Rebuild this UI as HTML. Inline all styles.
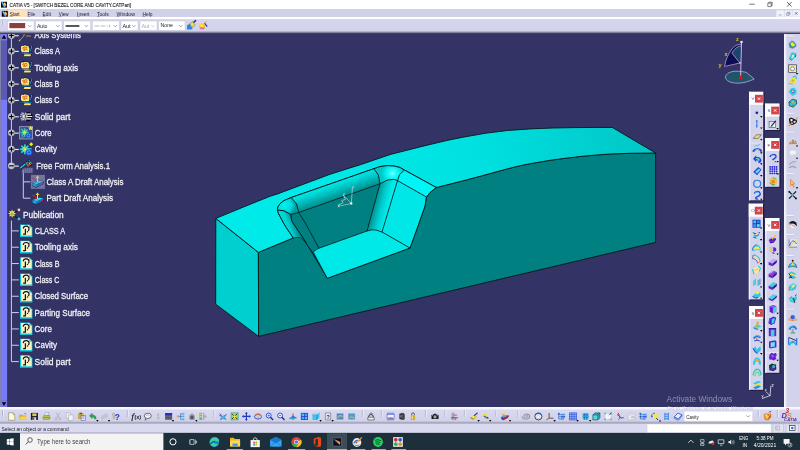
<!DOCTYPE html>
<html lang="en"><head><meta charset="utf-8"><title>CATIA V5 - [SWITCH BEZEL CORE AND CAVITY.CATPart]</title>
<style>
html,body{margin:0;padding:0;width:800px;height:450px;overflow:hidden;background:#333366;font-family:"Liberation Sans",sans-serif;}
div{position:absolute;overflow:hidden}
#app{left:0;top:0;width:800px;height:450px;will-change:transform;background:#333366}
svg{position:absolute;left:0;top:0;display:block}
svg text{font-family:"Liberation Sans",sans-serif}
#title{left:0;top:0;width:800px;height:9px;background:#fff}
#menu{left:0;top:9px;width:800px;height:8px;background:linear-gradient(#fff 0,#fff .4px,#d1d1e9 .4px,#d1d1e9 8px)}
#tb{left:0;top:17px;width:800px;height:17px;z-index:5;background:linear-gradient(#d1d1e9 0,#d1d1e9 .3px,#fff .3px,#fff 1.5px,#d6d6ee 2.1px,#d2d2ea 13.5px,#b4b4c6 14.5px,#8e8ea6 15.3px,#56567e 16.1px,#333366 16.7px)}
#view{left:0;top:32px;width:784px;height:375px;background:transparent}
#right{left:784px;top:32px;width:16px;height:376px;background:linear-gradient(90deg,#f6f6fd 0,#ececf8 1.6px,#d6d6ee 2.8px,#d2d2ea 3.4px,#d2d2ea 100%)}
#btb{left:0;top:407px;width:800px;height:17px;background:linear-gradient(#333366 0,#333366 .1px,#fafaff .1px,#f2f2fb 2.1px,#d8d8f0 2.9px,#d1d1e9 14.1px,#a8a8bc 15.3px,#b6b6ca 16.6px,#d9d9f0 16.6px)}
#status{left:0;top:424px;width:800px;height:9px;background:linear-gradient(#d9d9f0 0,#d9d9f0 8.2px,#8a90a4 9px)}
#task{left:0;top:433px;width:800px;height:17px;background:#1d2f3b}
</style></head><body>
<div id="app">

<div id="title"><svg class="" width="800" height="9" viewBox="0 0 800 9">
<g transform="translate(1,1.8)"><rect x="0" y="0" width="6" height="5.800" fill="#06060e"/><ellipse cx="3.900" cy="2.600" rx="1.250" ry="2.100" transform="rotate(-28 3.900 2.600)" fill="#f0942a"/><ellipse cx="3.700" cy="2.300" rx=".6" ry="1.200" transform="rotate(-28 3.700 2.300)" fill="#ffd878"/><path d="M.2 .5L1.700 .4L4.400 5.700L2.700 5.700Z" fill="#2a8ef0"/><path d="M.9 .5L1.700 .4L4.400 5.700L3.700 5.700Z" fill="#7fd0ff"/></g>
<text x="9.6" y="6.9" font-size="5.6" fill="#1a1a1a" textLength="121.5" lengthAdjust="spacingAndGlyphs" stroke="#1a1a1a" stroke-width=".12">CATIA V5 - [SWITCH BEZEL CORE AND CAVITY.CATPart]</text>
<path d="M749.400 4.200h5.200" stroke="#333" stroke-width=".7"/>
<path d="M767.800 3.200h3.400v3.400h-3.400z M768.800 3.200v-1h3.400v3.400h-1" stroke="#333" stroke-width=".6" fill="none"/>
<path d="M787 2l4.600 4.600M791.600 2l-4.600 4.600" stroke="#222" stroke-width=".7"/>
</svg></div>
<div id="menu"><svg class="" width="800" height="8" viewBox="0 9 800 8">
<rect x="8.6" y="9.4" width="18.4" height="7.9" fill="#fbe2bd"/>
<g transform="translate(1.8,10.9)"><rect x="0" y="0" width="6" height="5.800" fill="#06060e"/><ellipse cx="3.900" cy="2.600" rx="1.250" ry="2.100" transform="rotate(-28 3.900 2.600)" fill="#f0942a"/><ellipse cx="3.700" cy="2.300" rx=".6" ry="1.200" transform="rotate(-28 3.700 2.300)" fill="#ffd878"/><path d="M.2 .5L1.700 .4L4.400 5.700L2.700 5.700Z" fill="#2a8ef0"/><path d="M.9 .5L1.700 .4L4.400 5.700L3.700 5.700Z" fill="#7fd0ff"/></g>
<text x="9.8" y="16.15" font-size="6" fill="#1c1c30" textLength="9.8" lengthAdjust="spacingAndGlyphs" >Start</text>
<path d="M9.8 16.700h2.8" stroke="#1c1c30" stroke-width=".45" opacity=".8"/>
<text x="27.6" y="16.15" font-size="6" fill="#1c1c30" textLength="7.6" lengthAdjust="spacingAndGlyphs" >File</text>
<path d="M27.6 16.700h2.8" stroke="#1c1c30" stroke-width=".45" opacity=".8"/>
<text x="42.6" y="16.15" font-size="6" fill="#1c1c30" textLength="8.4" lengthAdjust="spacingAndGlyphs" >Edit</text>
<path d="M42.6 16.700h2.8" stroke="#1c1c30" stroke-width=".45" opacity=".8"/>
<text x="58.8" y="16.15" font-size="6" fill="#1c1c30" textLength="9.8" lengthAdjust="spacingAndGlyphs" >View</text>
<path d="M58.8 16.700h2.8" stroke="#1c1c30" stroke-width=".45" opacity=".8"/>
<text x="77" y="16.15" font-size="6" fill="#1c1c30" textLength="12.5" lengthAdjust="spacingAndGlyphs" >Insert</text>
<path d="M77 16.700h2.8" stroke="#1c1c30" stroke-width=".45" opacity=".8"/>
<text x="97" y="16.15" font-size="6" fill="#1c1c30" textLength="11.7" lengthAdjust="spacingAndGlyphs" >Tools</text>
<path d="M97 16.700h2.8" stroke="#1c1c30" stroke-width=".45" opacity=".8"/>
<text x="116.5" y="16.15" font-size="6" fill="#1c1c30" textLength="18.5" lengthAdjust="spacingAndGlyphs" >Window</text>
<path d="M116.5 16.700h2.8" stroke="#1c1c30" stroke-width=".45" opacity=".8"/>
<text x="142.5" y="16.15" font-size="6" fill="#1c1c30" textLength="10.0" lengthAdjust="spacingAndGlyphs" >Help</text>
<path d="M142.5 16.700h2.8" stroke="#1c1c30" stroke-width=".45" opacity=".8"/>
<rect x="776.400" y="10.400" width="7.500" height="6.400" fill="#f2f2fa"/><rect x="784.600" y="10.400" width="7.200" height="6.400" fill="#f2f2fa"/><rect x="792.500" y="10.400" width="7.500" height="6.400" fill="#f2f2fa"/>
<path d="M778.600 15h3" stroke="#7080b0" stroke-width=".6"/><path d="M786.600 13.200h2.400v2.200h-2.400zM787.600 13.200v-1h2.400v2.200h-1" stroke="#5068a0" stroke-width=".5" fill="none"/><path d="M794.800 12l2.800 2.800M797.600 12l-2.800 2.800" stroke="#4060a0" stroke-width=".7"/>
</svg></div>
<div id="tb"><svg class="" width="800" height="17" viewBox="0 17 800 17">
<path d="M3 19.800v5.800" stroke="#9c9cb8" stroke-width=".8"/><path d="M3.800 19.800v5.800" stroke="#fff" stroke-width=".6"/>
<rect x="7.6" y="21" width="26.4" height="9.2" fill="#fff" stroke="#c6c6d2" stroke-width=".5"/><path d="M28.2 25.2l1.6 1.6l1.6-1.6" stroke="#555" stroke-width=".55" fill="none"/>
<rect x="9.4" y="23" width="15.8" height="5.2" fill="#8e3d3f"/>
<rect x="35.6" y="21" width="26.4" height="9.2" fill="#fff" stroke="#c6c6d2" stroke-width=".5"/><path d="M56.199999999999996 25.2l1.6 1.6l1.6-1.6" stroke="#555" stroke-width=".55" fill="none"/>
<text x="36.9" y="27.9" font-size="5.8" fill="#222" textLength="10.6" lengthAdjust="spacingAndGlyphs" >Auto</text>
<rect x="63.6" y="21" width="26.999999999999993" height="9.2" fill="#fff" stroke="#c6c6d2" stroke-width=".5"/><path d="M84.8 25.2l1.6 1.6l1.6-1.6" stroke="#555" stroke-width=".55" fill="none"/>
<path d="M65.6 26h13.8" stroke="#111" stroke-width="1.4"/>
<rect x="92.4" y="21" width="27.0" height="9.2" fill="#fff" stroke="#c6c6d2" stroke-width=".5"/><path d="M113.60000000000001 25.2l1.6 1.6l1.6-1.6" stroke="#555" stroke-width=".55" fill="none"/>
<path d="M94.5 26h4.6M100.6 26h4.6M106.6 26h1.2M109.6 24.8v2.4" stroke="#999" stroke-width=".7"/>
<rect x="121" y="21" width="17" height="9.2" fill="#fff" stroke="#c6c6d2" stroke-width=".5"/><path d="M132.20000000000002 25.2l1.6 1.6l1.6-1.6" stroke="#555" stroke-width=".55" fill="none"/>
<text x="122.4" y="27.9" font-size="5.8" fill="#222" textLength="8.2" lengthAdjust="spacingAndGlyphs" >Aut</text>
<rect x="140" y="21" width="17" height="9.2" fill="#fff" stroke="#c6c6d2" stroke-width=".5"/><path d="M151.20000000000002 25.2l1.6 1.6l1.6-1.6" stroke="#a8a8b8" stroke-width=".55" fill="none"/>
<text x="141.4" y="27.9" font-size="5.8" fill="#aaa" textLength="8.2" lengthAdjust="spacingAndGlyphs" >Aut</text>
<rect x="158.6" y="21" width="26.400000000000006" height="9.2" fill="#fff" stroke="#c6c6d2" stroke-width=".5"/><path d="M179.20000000000002 25.2l1.6 1.6l1.6-1.6" stroke="#555" stroke-width=".55" fill="none"/>
<text x="160.6" y="27.3" font-size="5.8" fill="#222" textLength="12.4" lengthAdjust="spacingAndGlyphs" >None</text>
<path d="M187 25.2l3-1.4 2.6 4.4-1 1.4h-4.6z" fill="#2a86e8"/><path d="M189.6 23.6l3.4-2 2.2 3.8-3.4 2z" fill="#e8e040" stroke="#555" stroke-width=".4"/><path d="M193.6 22.6l2.4-2.4" stroke="#1a1a90" stroke-width="1.4"/>
<circle cx="202.2" cy="26.4" r="3" fill="#f8c820"/><path d="M199.4 27.6a3 3 0 0 0 5.6 0" fill="#e060d0"/><circle cx="201.6" cy="25.6" r="1.2" fill="#fff36a"/><path d="M204.6 23.2l2.6 3.4" stroke="#2a4ab0" stroke-width="1.3"/><path d="M204.4 22.6l2.4-1.4" stroke="#f0a080" stroke-width="1"/>
</svg></div>
<div id="view"><svg class="" width="784" height="375" viewBox="0 32 784 375">
<defs>
<linearGradient id="gtop" gradientUnits="userSpaceOnUse" x1="300" y1="220" x2="640" y2="130"><stop offset="0" stop-color="#00eaea"/><stop offset=".5" stop-color="#00e2e2"/><stop offset=".8" stop-color="#00d2d2"/><stop offset="1" stop-color="#00c8c8"/></linearGradient>
<linearGradient id="gback" gradientUnits="userSpaceOnUse" x1="330" y1="182" x2="336" y2="199"><stop offset="0" stop-color="#00ecec"/><stop offset=".25" stop-color="#00dede"/><stop offset=".5" stop-color="#00c4c4"/><stop offset=".75" stop-color="#00a8a8"/><stop offset="1" stop-color="#008e8e"/></linearGradient>
<linearGradient id="gleftf" gradientUnits="userSpaceOnUse" x1="279" y1="222" x2="294" y2="216"><stop offset="0" stop-color="#00e6e6"/><stop offset=".5" stop-color="#00d0d0"/><stop offset="1" stop-color="#007c7c"/></linearGradient>
<linearGradient id="gvert" gradientUnits="userSpaceOnUse" x1="372" y1="205" x2="388" y2="209"><stop offset="0" stop-color="#008282"/><stop offset=".6" stop-color="#00d0d0"/><stop offset="1" stop-color="#00eeee"/></linearGradient>
<radialGradient id="gcorner" gradientUnits="userSpaceOnUse" cx="392.6" cy="173.4" r="11"><stop offset="0" stop-color="#b0ffff"/><stop offset=".2" stop-color="#30ffff"/><stop offset=".7" stop-color="#00e8e8"/><stop offset="1" stop-color="#00c8c8"/></radialGradient>
<radialGradient id="gcornerL" gradientUnits="userSpaceOnUse" cx="284" cy="205" r="12"><stop offset="0" stop-color="#00f2f2"/><stop offset=".6" stop-color="#00dada"/><stop offset="1" stop-color="#009a9a"/></radialGradient>
</defs>
<path d="M215.8 218.4 L258.4 252.4 L258.6 336.4 L215.7 304.2Z" fill="#00cfcf" stroke="#001a1a" stroke-width=".9" stroke-linejoin="round"/>
<path d="M258.4 252.4 L293.3 237.9 L296 237.1 L298.7 237 L301 237.8 L303.3 239.7 L306.7 244 L312.7 253.7 L327.3 278.3 L410 248 L418 226 L425 206 L426.25 197.5 L430 192.5 L436.25 187.5 L450 184.1 L465 180.3 L480 176.3 L490 173.6 L507.5 168.8 L520 165.7 L530 163.7 L550 160.3 L565 158.3 L580 156.5 L597.5 154.9 L610 154 L630 153.3 L655.6 153 L655.6 242.4 L258.6 336.4Z" fill="#008080" stroke="#001a1a" stroke-width=".9" stroke-linejoin="round"/>
<path d="M215.8 218.4 L225.1 214.6 L247 205.6 L270 196.3 L277.6 193.9 L300 185.5 L314 180.3 L330 174.3 L350 167.9 L360.2 164.8 L375 159.7 L390 154.6 L400 152 L420 146.9 L440 142.1 L450 139.8 L462.5 137.3 L485 133.3 L507.5 130.5 L530 128.9 L552.5 128 L575 127.6 L597.5 127.4 L612.4 127.5 L655.6 153 L630 153.3 L610 154 L597.5 154.9 L580 156.5 L565 158.3 L550 160.3 L530 163.7 L520 165.7 L507.5 168.8 L490 173.6 L480 176.3 L465 180.3 L450 184.1 L436.25 187.5 L436.25 187.5 L404.4 170 L400 167.5 L394 166 L387.5 165.6 L380 166.6 L373.75 168.75 L291.25 197.5 L284 200.6 L280 203.75 L277.8 207 L277.5 210 L278.4 213.4 L280 216.25 L283 222 L286.25 227.5 L290 233 L293.3 237.9 L258.4 252.4Z" fill="url(#gtop)" stroke="#001a1a" stroke-width=".9" stroke-linejoin="round"/>
<path d="M290.6 214.4 L298.75 212.5 L380 183.75 L367 231 L318.7 248.2 L313.3 252.3 L306.7 243.7 L303.3 238.3 L300 233.4 L294.7 225.6 L291.9 221.25Z" fill="#008080"/>
<path d="M291.25 197.5 L373.75 168.75 L378.4 175 L380 183.75 L298.75 212.5 L296.6 204Z" fill="url(#gback)"/>
<path d="M291.25 197.5 L284 200.6 L280 203.75 L277.8 207 L277.5 210 L284 210.8 L290.6 214.4 L298.75 212.5 L296.6 204Z" fill="url(#gcornerL)"/>
<path d="M277.5 210 L278.4 213.4 L280 216.25 L283 222 L286.25 227.5 L290 233 L293.3 237.9 L296 237.1 L298.7 237 L301 237.8 L303.3 239.7 L306.7 243.7 L303.3 238.3 L300 233.4 L294.7 225.6 L291.9 221.25 L290.6 214.4 L284 210.8Z" fill="url(#gleftf)"/>
<path d="M373.75 168.75 L380 166.6 L387.5 165.6 L394 166 L400 167.5 L404.4 170 L399.6 174.6 L397.5 180.6 L393.75 179.4 L387.5 180 L380 183.75 L378.4 175Z" fill="url(#gcorner)"/>
<path d="M404.4 170 L436.25 187.5 L430 192.5 L426.25 196.9 L397.5 180.6 L399.6 174.6Z" fill="#00f6f6"/>
<path d="M380 183.75 L387.5 180 L393.75 179.4 L397.5 180.6 L382 232 L376 230 L367 231Z" fill="url(#gvert)"/>
<path d="M397.5 180.6 L426.25 196.9 L425 206 L418 226 L410 248 L382 232Z" fill="#00e7e7"/>
<path d="M313.3 252.3 L315.4 250 L318.7 248.3 L367 231 L372 229.8 L376 230 L382 232 L410 248 L327.3 278.3Z" fill="#00e9e9" stroke="#001a1a" stroke-width=".8" stroke-linejoin="round"/>
<path d="M436.25 187.5 L404.4 170 L400 167.5 L394 166 L387.5 165.6 L380 166.6 L373.75 168.75 L291.25 197.5 L284 200.6 L280 203.75 L277.8 207 L277.5 210 L278.4 213.4 L280 216.25 L283 222 L286.25 227.5 L290 233 L293.3 237.9" fill="none" stroke="#001a1a" stroke-width="0.9" stroke-linejoin="round" stroke-linecap="round"/>
<path d="M290.6 214.4 L298.75 212.5 L380 183.75 L387.5 180 L393.75 179.4 L397.5 180.6 L426.25 196.9" fill="none" stroke="#001a1a" stroke-width="0.8" stroke-linejoin="round" stroke-linecap="round"/>
<path d="M291.25 197.5 L296.6 204 L298.75 212.5 L306.7 225.4 L318.7 248" fill="none" stroke="#001a1a" stroke-width="0.8" stroke-linejoin="round" stroke-linecap="round"/>
<path d="M277.5 210 L284 210.8 L290.6 214.4 L291.9 221.25 L294.7 225.6 L300 233.4 L303.3 238.3 L306.7 243.7" fill="none" stroke="#001a1a" stroke-width="1" stroke-linejoin="round" stroke-linecap="round"/>
<path d="M373.75 168.75 L378.4 175 L380 183.75 L367 231" fill="none" stroke="#001a1a" stroke-width="0.8" stroke-linejoin="round" stroke-linecap="round"/>
<path d="M404.4 170 L399.6 174.6 L397.5 180.6 L382 232" fill="none" stroke="#001a1a" stroke-width="0.8" stroke-linejoin="round" stroke-linecap="round"/>
<path d="M410 248 L418 226 L425 206 L426.25 197.5 L430 192.5 L436.25 187.5" fill="none" stroke="#001a1a" stroke-width="0.9" stroke-linejoin="round" stroke-linecap="round"/>
<g stroke="#e6e6f0" stroke-width=".55" fill="none" stroke-linecap="round"><path d="M351.300 203.500L352.400 188M351.300 203.500L343.500 195.300M351.300 203.500L338.500 206.300M343.500 195.300l1.800 4.200l-3.600 1.100l1.400 2.100l-3.900 1.800l-.7 1.800"/><path d="M352.600 186.400h1.300l-1.300 1.500h1.300M343.300 193.400l1.300 1.400M344.600 193.400l-1.300 1.400M338 204.600l.8 1.400M339.600 204.600l-1.400 2.600" stroke-width=".4"/></g><rect x="350.300" y="202.500" width="2" height="2" fill="#fff"/>
<path d="M11.4 32V165.52" stroke="#cfcfe4" stroke-width="1"/>
<path d="M11.4 220.54V361.6" stroke="#cfcfe4" stroke-width="1"/>
<path d="M23.3 172.52V198.2" stroke="#cfcfe4" stroke-width="1"/>
<path d="M14.4 35.699999999999996H18.8" stroke="#e4e4f2" stroke-width="1.15"/><circle cx="11.4" cy="35.4" r="3.4" fill="#b9b9c3"/><circle cx="10.9" cy="34.8" r="2.2" fill="#d2d2da"/><path d="M9.100000000000001 35.4H13.7" stroke="#000" stroke-width="1.15"/><path d="M11.4 33.1V37.699999999999996" stroke="#000" stroke-width="1.15"/>
<path d="M14.4 51.44H18.8" stroke="#e4e4f2" stroke-width="1.15"/><circle cx="11.4" cy="51.14" r="3.4" fill="#b9b9c3"/><circle cx="10.9" cy="50.54" r="2.2" fill="#d2d2da"/><path d="M9.100000000000001 51.14H13.7" stroke="#000" stroke-width="1.15"/><path d="M11.4 48.84V53.44" stroke="#000" stroke-width="1.15"/>
<path d="M14.4 67.78H18.8" stroke="#e4e4f2" stroke-width="1.15"/><circle cx="11.4" cy="67.48" r="3.4" fill="#b9b9c3"/><circle cx="10.9" cy="66.88000000000001" r="2.2" fill="#d2d2da"/><path d="M9.100000000000001 67.48H13.7" stroke="#000" stroke-width="1.15"/><path d="M11.4 65.18V69.78" stroke="#000" stroke-width="1.15"/>
<path d="M14.4 84.11999999999999H18.8" stroke="#e4e4f2" stroke-width="1.15"/><circle cx="11.4" cy="83.82" r="3.4" fill="#b9b9c3"/><circle cx="10.9" cy="83.22" r="2.2" fill="#d2d2da"/><path d="M9.100000000000001 83.82H13.7" stroke="#000" stroke-width="1.15"/><path d="M11.4 81.52V86.11999999999999" stroke="#000" stroke-width="1.15"/>
<path d="M14.4 100.46H18.8" stroke="#e4e4f2" stroke-width="1.15"/><circle cx="11.4" cy="100.16" r="3.4" fill="#b9b9c3"/><circle cx="10.9" cy="99.56" r="2.2" fill="#d2d2da"/><path d="M9.100000000000001 100.16H13.7" stroke="#000" stroke-width="1.15"/><path d="M11.4 97.86V102.46" stroke="#000" stroke-width="1.15"/>
<path d="M14.4 116.8H18.8" stroke="#e4e4f2" stroke-width="1.15"/><circle cx="11.4" cy="116.5" r="3.4" fill="#b9b9c3"/><circle cx="10.9" cy="115.9" r="2.2" fill="#d2d2da"/><path d="M9.100000000000001 116.5H13.7" stroke="#000" stroke-width="1.15"/><path d="M11.4 114.2V118.8" stroke="#000" stroke-width="1.15"/>
<path d="M14.4 133.14000000000001H18.8" stroke="#e4e4f2" stroke-width="1.15"/><circle cx="11.4" cy="132.84" r="3.4" fill="#b9b9c3"/><circle cx="10.9" cy="132.24" r="2.2" fill="#d2d2da"/><path d="M9.100000000000001 132.84H13.7" stroke="#000" stroke-width="1.15"/><path d="M11.4 130.54V135.14000000000001" stroke="#000" stroke-width="1.15"/>
<path d="M14.4 149.48000000000002H18.8" stroke="#e4e4f2" stroke-width="1.15"/><circle cx="11.4" cy="149.18" r="3.4" fill="#b9b9c3"/><circle cx="10.9" cy="148.58" r="2.2" fill="#d2d2da"/><path d="M9.100000000000001 149.18H13.7" stroke="#000" stroke-width="1.15"/><path d="M11.4 146.88V151.48000000000002" stroke="#000" stroke-width="1.15"/>
<path d="M14.4 166.12000000000003H18.8" stroke="#e4e4f2" stroke-width="1.15"/><circle cx="11.4" cy="165.82000000000002" r="3.4" fill="#b9b9c3"/><circle cx="10.9" cy="165.22000000000003" r="2.2" fill="#d2d2da"/><path d="M9.100000000000001 165.82000000000002H13.7" stroke="#000" stroke-width="1.15"/>
<path d="M23.3 181.86H30.4" stroke="#cfcfe4" stroke-width="1"/>
<path d="M23.3 198.2H30.4" stroke="#cfcfe4" stroke-width="1"/>
<path d="M11.4 230.88H18.8" stroke="#cfcfe4" stroke-width="1"/>
<path d="M11.4 247.22H18.8" stroke="#cfcfe4" stroke-width="1"/>
<path d="M11.4 263.56H18.8" stroke="#cfcfe4" stroke-width="1"/>
<path d="M11.4 279.9H18.8" stroke="#cfcfe4" stroke-width="1"/>
<path d="M11.4 296.24H18.8" stroke="#cfcfe4" stroke-width="1"/>
<path d="M11.4 312.58H18.8" stroke="#cfcfe4" stroke-width="1"/>
<path d="M11.4 328.92H18.8" stroke="#cfcfe4" stroke-width="1"/>
<path d="M11.4 345.26H18.8" stroke="#cfcfe4" stroke-width="1"/>
<path d="M11.4 361.6H18.8" stroke="#cfcfe4" stroke-width="1"/>
<g transform="translate(20.3,44.94)"><path d="M.6 2.200C.8 1 2 .6 3 1.100 3.800 .2 5.400 .2 6.200 .9 7.400 .5 8.600 1.400 8.800 2.800 9.500 4.200 9.300 6 8.400 7.500L2 7.600C1 7 .4 5 .6 2.200Z" fill="#f9ea7c" stroke="#15153f" stroke-width="1.300" stroke-linejoin="round" paint-order="stroke"/>
<path d="M2.400 2.200C3.400 1.400 5 1.400 6 2 7 2.400 7.400 3.400 7 4.400 6 5.400 4 5.600 2.800 4.800 2 4 2 3 2.400 2.200Z" fill="#f6b04c" opacity=".75"/>
<path d="M2 3.400c.8-.9 1.700-1 2.500-.3M4.800 2.200c1-.3 1.900.1 2.300.9M2.800 5c.9.500 2 .4 2.700-.2M5.600 4l1.500.9M3.400 4l1.200.3" stroke="#dc4c16" stroke-width=".9" fill="none"/>
<path d="M1 8.300L11.400 8.500" stroke="#15153f" stroke-width="2.200"/><path d="M1 8.200L11.400 8.400" stroke="#1b78c4" stroke-width="1.300"/><path d="M3.600 8.300h4.600" stroke="#46b8ee" stroke-width=".8"/>
<path d="M3.300 11L4.300 9.300L9.700 9.300L10.800 9.900L10.100 11.300L3.700 11.300Z" fill="#f7e570" stroke="#15153f" stroke-width=".9" stroke-linejoin="round" paint-order="stroke"/>
<path d="M10.800 .7L11.500 2.100L10.600 4.300L9.500 6.900" stroke="#15153f" stroke-width="1.900" fill="none"/><path d="M10.800 .7L11.500 2.100L10.600 4.300L9.500 6.900" stroke="#2f9fe2" stroke-width=".95" fill="none"/></g>
<g transform="translate(20.3,61.28)"><path d="M.6 2.200C.8 1 2 .6 3 1.100 3.800 .2 5.400 .2 6.200 .9 7.400 .5 8.600 1.400 8.800 2.800 9.500 4.200 9.300 6 8.400 7.500L2 7.600C1 7 .4 5 .6 2.200Z" fill="#f9ea7c" stroke="#15153f" stroke-width="1.300" stroke-linejoin="round" paint-order="stroke"/>
<path d="M2.400 2.200C3.400 1.400 5 1.400 6 2 7 2.400 7.400 3.400 7 4.400 6 5.400 4 5.600 2.800 4.800 2 4 2 3 2.400 2.200Z" fill="#f6b04c" opacity=".75"/>
<path d="M2 3.400c.8-.9 1.700-1 2.500-.3M4.800 2.200c1-.3 1.900.1 2.300.9M2.800 5c.9.500 2 .4 2.700-.2M5.600 4l1.500.9M3.400 4l1.200.3" stroke="#dc4c16" stroke-width=".9" fill="none"/>
<path d="M1 8.300L11.400 8.500" stroke="#15153f" stroke-width="2.200"/><path d="M1 8.200L11.400 8.400" stroke="#1b78c4" stroke-width="1.300"/><path d="M3.600 8.300h4.600" stroke="#46b8ee" stroke-width=".8"/>
<path d="M3.300 11L4.300 9.300L9.700 9.300L10.800 9.900L10.100 11.300L3.700 11.300Z" fill="#f7e570" stroke="#15153f" stroke-width=".9" stroke-linejoin="round" paint-order="stroke"/>
<path d="M10.800 .7L11.500 2.100L10.600 4.300L9.500 6.900" stroke="#15153f" stroke-width="1.900" fill="none"/><path d="M10.800 .7L11.500 2.100L10.600 4.300L9.500 6.900" stroke="#2f9fe2" stroke-width=".95" fill="none"/></g>
<g transform="translate(20.3,77.61999999999999)"><path d="M.6 2.200C.8 1 2 .6 3 1.100 3.800 .2 5.400 .2 6.200 .9 7.400 .5 8.600 1.400 8.800 2.800 9.500 4.200 9.300 6 8.400 7.500L2 7.600C1 7 .4 5 .6 2.200Z" fill="#f9ea7c" stroke="#15153f" stroke-width="1.300" stroke-linejoin="round" paint-order="stroke"/>
<path d="M2.400 2.200C3.400 1.400 5 1.400 6 2 7 2.400 7.400 3.400 7 4.400 6 5.400 4 5.600 2.800 4.800 2 4 2 3 2.400 2.200Z" fill="#f6b04c" opacity=".75"/>
<path d="M2 3.400c.8-.9 1.700-1 2.500-.3M4.800 2.200c1-.3 1.900.1 2.300.9M2.800 5c.9.500 2 .4 2.700-.2M5.600 4l1.500.9M3.400 4l1.200.3" stroke="#dc4c16" stroke-width=".9" fill="none"/>
<path d="M1 8.300L11.400 8.500" stroke="#15153f" stroke-width="2.200"/><path d="M1 8.200L11.400 8.400" stroke="#1b78c4" stroke-width="1.300"/><path d="M3.600 8.300h4.600" stroke="#46b8ee" stroke-width=".8"/>
<path d="M3.300 11L4.300 9.300L9.700 9.300L10.800 9.900L10.100 11.300L3.700 11.300Z" fill="#f7e570" stroke="#15153f" stroke-width=".9" stroke-linejoin="round" paint-order="stroke"/>
<path d="M10.800 .7L11.500 2.100L10.600 4.300L9.500 6.900" stroke="#15153f" stroke-width="1.900" fill="none"/><path d="M10.800 .7L11.500 2.100L10.600 4.300L9.500 6.900" stroke="#2f9fe2" stroke-width=".95" fill="none"/></g>
<g transform="translate(20.3,93.96)"><path d="M.6 2.200C.8 1 2 .6 3 1.100 3.800 .2 5.400 .2 6.200 .9 7.400 .5 8.600 1.400 8.800 2.800 9.500 4.200 9.300 6 8.400 7.500L2 7.600C1 7 .4 5 .6 2.200Z" fill="#f9ea7c" stroke="#15153f" stroke-width="1.300" stroke-linejoin="round" paint-order="stroke"/>
<path d="M2.400 2.200C3.400 1.400 5 1.400 6 2 7 2.400 7.400 3.400 7 4.400 6 5.400 4 5.600 2.800 4.800 2 4 2 3 2.400 2.200Z" fill="#f6b04c" opacity=".75"/>
<path d="M2 3.400c.8-.9 1.700-1 2.500-.3M4.800 2.200c1-.3 1.900.1 2.300.9M2.800 5c.9.500 2 .4 2.700-.2M5.600 4l1.500.9M3.400 4l1.200.3" stroke="#dc4c16" stroke-width=".9" fill="none"/>
<path d="M1 8.300L11.400 8.500" stroke="#15153f" stroke-width="2.200"/><path d="M1 8.200L11.400 8.400" stroke="#1b78c4" stroke-width="1.300"/><path d="M3.600 8.300h4.600" stroke="#46b8ee" stroke-width=".8"/>
<path d="M3.300 11L4.300 9.300L9.700 9.300L10.800 9.900L10.100 11.300L3.700 11.300Z" fill="#f7e570" stroke="#15153f" stroke-width=".9" stroke-linejoin="round" paint-order="stroke"/>
<path d="M10.800 .7L11.500 2.100L10.600 4.300L9.500 6.900" stroke="#15153f" stroke-width="1.900" fill="none"/><path d="M10.800 .7L11.500 2.100L10.600 4.300L9.500 6.900" stroke="#2f9fe2" stroke-width=".95" fill="none"/></g>
<path d="M19.4 40.400L23.600 36.400L24.600 33" stroke="#cdb548" stroke-width=".8" fill="none"/><path d="M26.200 36H30.800" stroke="#cdb548" stroke-width=".8"/><rect x="18.800" y="39.800" width="1.400" height="1.400" fill="#e0c860"/>
<g transform="translate(19.800,110.7)"><circle cx="8.200" cy="6" r="4.700" fill="#0b0b1a"/><path d="M6.400 3.400h4.800M6 5.800h6.400M6.400 8.200h5" stroke="#ececf4" stroke-width="1.200"/>
<circle cx="3.900" cy="5.800" r="3.100" fill="none" stroke="#c9c9d6" stroke-width="1.500" stroke-dasharray="1.300 .9"/><circle cx="3.900" cy="5.800" r="2.100" fill="#8e8ea4"/><circle cx="3.900" cy="5.800" r="1" fill="#e6e6ee"/><path d="M2 1.400l3.600 8.800M6 1.600l-4 8.400" stroke="#dcdce8" stroke-width=".7"/></g>
<g transform="translate(19,126.04)"><rect x="0" y="0" width="14" height="13.400" fill="#8c8cb4"/><rect x="1.100" y="1.100" width="11.800" height="11.200" fill="#34508e"/>
<path d="M1.40 6.40L9.80 6.40M2.63 3.43L8.57 9.37M5.60 2.20L5.60 10.60M8.57 3.43L2.63 9.37" stroke="#35c6d0" stroke-width="1.500"/><path d="M3.20 6.40L8.00 6.40M3.90 4.70L7.30 8.10M5.60 4.00L5.60 8.80M7.30 4.70L3.90 8.10" stroke="#7ce070" stroke-width="1"/><circle cx="5.600" cy="6.400" r="1.100" fill="#e8e050"/>
<circle cx="9.400" cy="9.400" r="2.800" fill="#2450dc"/><circle cx="9.400" cy="9.400" r="1.500" fill="none" stroke="#3cc0ea" stroke-width=".8"/>
<path d="M2 11.400c1-.8 2-.8 3 0M2.400 2.600l1.600 1" stroke="#56d8a0" stroke-width=".7" fill="none"/>
<path d="M11.600 -.2l.9 1.500 1.700.2-1.200 1.100.3 1.700-1.700-.9-1.600.9.300-1.700-1.100-1.100 1.600-.2z" fill="#ece444"/></g>
<g transform="translate(19.400,141.98000000000002)"><circle cx="5.400" cy="7.200" r="5" fill="#1b2660"/>
<path d="M0.40 7.20L10.40 7.20M1.86 3.66L8.94 10.74M5.40 2.20L5.40 12.20M8.94 3.66L1.86 10.74" stroke="#32c4d0" stroke-width="1.900"/><path d="M2.40 7.20L8.40 7.20M3.28 5.08L7.52 9.32M5.40 4.20L5.40 10.20M7.52 5.08L3.28 9.32" stroke="#78e46c" stroke-width="1.200"/><circle cx="5.400" cy="7.200" r="1.200" fill="#ece04c"/>
<circle cx="9.600" cy="10.400" r="3.200" fill="#2350e0"/><circle cx="9.600" cy="10.400" r="1.700" fill="none" stroke="#3cc4ee" stroke-width=".9"/><path d="M7 6.800h5.400" stroke="#34ccd8" stroke-width="1.100"/>
<path d="M11.800 .2l2 2-2 2-2-2z" fill="#f6f200"/></g>
<g transform="translate(19.800,159.12)"><rect x="3" y="8.600" width="10.400" height="5.400" fill="#62628f" opacity=".75"/><path d="M5.400 9.600v4M7.400 9.200v4.400M9.400 9.200v4.400M11.400 9v4.600" stroke="#8c8cb6" stroke-width=".8"/><path d="M3.200 13.600v-3" stroke="#d8d8e8" stroke-width=".8"/>
<path d="M.4 9L9.800 1.400" stroke="#14143a" stroke-width="2.800"/><path d="M.4 9L9.800 1.400" stroke="#27c6ce" stroke-width="1.400"/>
<path d="M6 3.600l2.600 4.200M8.200 2l3.400 4.600" stroke="#14143a" stroke-width="2.200"/><path d="M6 3.600l2.400 3.800" stroke="#27c6ce" stroke-width="1.100"/>
<path d="M7.400 4.400l1.700 2.600" stroke="#e8341a" stroke-width="1.600"/><path d="M9 3.200l1.700 2.500" stroke="#f09a20" stroke-width="1.300"/><path d="M10.200 2.400l1.500 2.200" stroke="#27c6ce" stroke-width="1"/></g>
<g transform="translate(30.9,174.86)"><rect x="0" y="0" width="14" height="14" fill="#74749f"/><g opacity=".82"><path d="M1.400 8.200l7.200-2.700 4.600 1-.9 2.900-7 3.400-4-1.500z" fill="#12123a"/><path d="M1.600 8.200l7-2.500 4.200.9-6.800 2.900z" fill="#2fd2e2"/><path d="M6 9.500l6.800-2.900-.8 2.600-6.600 3.200z" fill="#1b6fd4"/><path d="M8.600 10.900l4.200-4.300-.8 2.600-2.400 1.200z" fill="#d01c30"/><path d="M1.600 8.200l4.400 1.300-.6 2.900-3.900-1.500z" fill="#1e9edc"/>
<path d="M6.600 7.800V2.600" stroke="#f4e820" stroke-width="1.100"/><path d="M6.600 .6l1.800 2.500h-3.600z" fill="#f4e820"/><path d="M6.600 7.800L2.800 3.800" stroke="#d02838" stroke-width=".9"/><circle cx="2.600" cy="3.600" r=".9" fill="#d02838"/></g></g>
<g transform="translate(30.9,191.79999999999998)"><path d="M1.400 8.200l7.200-2.700 4.600 1-.9 2.900-7 3.400-4-1.500z" fill="#12123a"/><path d="M1.600 8.200l7-2.500 4.200.9-6.800 2.900z" fill="#2fd2e2"/><path d="M6 9.500l6.800-2.900-.8 2.600-6.600 3.200z" fill="#1b6fd4"/><path d="M8.600 10.900l4.200-4.300-.8 2.600-2.400 1.200z" fill="#d01c30"/><path d="M1.600 8.200l4.400 1.300-.6 2.900-3.900-1.500z" fill="#1e9edc"/>
<path d="M6.600 7.800V2.600" stroke="#f4e820" stroke-width="1.100"/><path d="M6.600 .6l1.800 2.500h-3.600z" fill="#f4e820"/><path d="M6.600 7.800L2.800 3.800" stroke="#d02838" stroke-width=".9"/><circle cx="2.600" cy="3.600" r=".9" fill="#d02838"/></g>
<g transform="translate(8.300,208.54)"><path d="M4 5.600L10.400 1.400M4 5.600L10.400 10.400" stroke="#101020" stroke-width="1"/>
<path d="M3.800 1l.9 2 2-.9-.9 2 2 .9-2 1 .9 2-2-.9-.9 2-.9-2-2 .9.900-2-2-1 2-.9-.9-2 2 .9z" fill="#f0e848"/><circle cx="3.800" cy="5.400" r="1.500" fill="#8a8a50"/><circle cx="3.800" cy="5.400" r=".8" fill="#d0d0a0"/>
<circle cx="10.600" cy="1.400" r="1.400" fill="#f2d2a2"/><circle cx="10.600" cy="10.400" r="1.400" fill="#30d0e0"/></g>
<g transform="translate(20.4,224.48)"><path d="M-.4 0h9.400l3 3v9.600h-12.400z" fill="#19c4d6"/><path d="M.8 .5h7.800l2.700 2.700v7.900h-10.500z" fill="#faf3c6"/><path d="M.8 .5h5v4h-5z" fill="#fffef0" opacity=".7"/><path d="M8.600 .5l2.700 2.700h-2.700z" fill="#58c8e8"/>
<path d="M2.700 9.700h2.300V4.300" stroke="#14140c" stroke-width="1.250" fill="none" stroke-linejoin="round"/><path d="M2.800 4.200C3 2.400 4.600 1.600 6 1.700 7.600 1.800 8.800 3 8.600 4.600 8.500 5.400 8.200 5.900 7.800 6.200" stroke="#14140c" stroke-width="1.200" fill="none"/><circle cx="7.100" cy="7.200" r=".7" fill="#14140c"/></g>
<g transform="translate(20.4,240.82)"><path d="M-.4 0h9.400l3 3v9.600h-12.400z" fill="#19c4d6"/><path d="M.8 .5h7.800l2.700 2.700v7.900h-10.500z" fill="#faf3c6"/><path d="M.8 .5h5v4h-5z" fill="#fffef0" opacity=".7"/><path d="M8.600 .5l2.700 2.700h-2.700z" fill="#58c8e8"/>
<path d="M2.700 9.700h2.300V4.300" stroke="#14140c" stroke-width="1.250" fill="none" stroke-linejoin="round"/><path d="M2.800 4.200C3 2.400 4.600 1.600 6 1.700 7.600 1.800 8.800 3 8.600 4.600 8.500 5.400 8.200 5.900 7.800 6.200" stroke="#14140c" stroke-width="1.200" fill="none"/><circle cx="7.100" cy="7.200" r=".7" fill="#14140c"/></g>
<g transform="translate(20.4,257.16)"><path d="M-.4 0h9.400l3 3v9.600h-12.400z" fill="#19c4d6"/><path d="M.8 .5h7.800l2.700 2.700v7.900h-10.500z" fill="#faf3c6"/><path d="M.8 .5h5v4h-5z" fill="#fffef0" opacity=".7"/><path d="M8.600 .5l2.700 2.700h-2.700z" fill="#58c8e8"/>
<path d="M2.700 9.700h2.300V4.300" stroke="#14140c" stroke-width="1.250" fill="none" stroke-linejoin="round"/><path d="M2.800 4.200C3 2.400 4.600 1.600 6 1.700 7.600 1.800 8.800 3 8.600 4.600 8.500 5.400 8.200 5.900 7.800 6.200" stroke="#14140c" stroke-width="1.200" fill="none"/><circle cx="7.100" cy="7.200" r=".7" fill="#14140c"/></g>
<g transform="translate(20.4,273.5)"><path d="M-.4 0h9.400l3 3v9.600h-12.400z" fill="#19c4d6"/><path d="M.8 .5h7.800l2.700 2.700v7.900h-10.500z" fill="#faf3c6"/><path d="M.8 .5h5v4h-5z" fill="#fffef0" opacity=".7"/><path d="M8.600 .5l2.700 2.700h-2.700z" fill="#58c8e8"/>
<path d="M2.700 9.700h2.300V4.300" stroke="#14140c" stroke-width="1.250" fill="none" stroke-linejoin="round"/><path d="M2.800 4.200C3 2.400 4.600 1.600 6 1.700 7.600 1.800 8.800 3 8.600 4.600 8.500 5.400 8.200 5.900 7.800 6.200" stroke="#14140c" stroke-width="1.200" fill="none"/><circle cx="7.100" cy="7.200" r=".7" fill="#14140c"/></g>
<g transform="translate(20.4,289.84000000000003)"><path d="M-.4 0h9.400l3 3v9.600h-12.400z" fill="#19c4d6"/><path d="M.8 .5h7.800l2.700 2.700v7.900h-10.500z" fill="#faf3c6"/><path d="M.8 .5h5v4h-5z" fill="#fffef0" opacity=".7"/><path d="M8.600 .5l2.700 2.700h-2.700z" fill="#58c8e8"/>
<path d="M2.700 9.700h2.300V4.300" stroke="#14140c" stroke-width="1.250" fill="none" stroke-linejoin="round"/><path d="M2.800 4.200C3 2.400 4.600 1.600 6 1.700 7.600 1.800 8.800 3 8.600 4.600 8.500 5.400 8.200 5.900 7.800 6.200" stroke="#14140c" stroke-width="1.200" fill="none"/><circle cx="7.100" cy="7.200" r=".7" fill="#14140c"/></g>
<g transform="translate(20.4,306.18)"><path d="M-.4 0h9.400l3 3v9.600h-12.400z" fill="#19c4d6"/><path d="M.8 .5h7.800l2.700 2.700v7.900h-10.500z" fill="#faf3c6"/><path d="M.8 .5h5v4h-5z" fill="#fffef0" opacity=".7"/><path d="M8.600 .5l2.700 2.700h-2.700z" fill="#58c8e8"/>
<path d="M2.700 9.700h2.300V4.300" stroke="#14140c" stroke-width="1.250" fill="none" stroke-linejoin="round"/><path d="M2.800 4.200C3 2.400 4.600 1.600 6 1.700 7.600 1.800 8.800 3 8.600 4.600 8.500 5.400 8.200 5.900 7.800 6.200" stroke="#14140c" stroke-width="1.200" fill="none"/><circle cx="7.100" cy="7.200" r=".7" fill="#14140c"/></g>
<g transform="translate(20.4,322.52000000000004)"><path d="M-.4 0h9.400l3 3v9.600h-12.400z" fill="#19c4d6"/><path d="M.8 .5h7.800l2.700 2.700v7.900h-10.500z" fill="#faf3c6"/><path d="M.8 .5h5v4h-5z" fill="#fffef0" opacity=".7"/><path d="M8.600 .5l2.700 2.700h-2.700z" fill="#58c8e8"/>
<path d="M2.700 9.700h2.300V4.300" stroke="#14140c" stroke-width="1.250" fill="none" stroke-linejoin="round"/><path d="M2.800 4.200C3 2.400 4.600 1.600 6 1.700 7.600 1.800 8.800 3 8.600 4.600 8.500 5.400 8.200 5.900 7.800 6.200" stroke="#14140c" stroke-width="1.200" fill="none"/><circle cx="7.100" cy="7.200" r=".7" fill="#14140c"/></g>
<g transform="translate(20.4,338.86)"><path d="M-.4 0h9.400l3 3v9.600h-12.400z" fill="#19c4d6"/><path d="M.8 .5h7.800l2.700 2.700v7.900h-10.500z" fill="#faf3c6"/><path d="M.8 .5h5v4h-5z" fill="#fffef0" opacity=".7"/><path d="M8.600 .5l2.700 2.700h-2.700z" fill="#58c8e8"/>
<path d="M2.700 9.700h2.300V4.300" stroke="#14140c" stroke-width="1.250" fill="none" stroke-linejoin="round"/><path d="M2.800 4.200C3 2.400 4.600 1.600 6 1.700 7.600 1.800 8.800 3 8.600 4.600 8.500 5.400 8.200 5.900 7.800 6.200" stroke="#14140c" stroke-width="1.200" fill="none"/><circle cx="7.100" cy="7.200" r=".7" fill="#14140c"/></g>
<g transform="translate(20.4,355.20000000000005)"><path d="M-.4 0h9.400l3 3v9.600h-12.400z" fill="#19c4d6"/><path d="M.8 .5h7.800l2.700 2.700v7.900h-10.500z" fill="#faf3c6"/><path d="M.8 .5h5v4h-5z" fill="#fffef0" opacity=".7"/><path d="M8.600 .5l2.700 2.700h-2.700z" fill="#58c8e8"/>
<path d="M2.700 9.700h2.300V4.300" stroke="#14140c" stroke-width="1.250" fill="none" stroke-linejoin="round"/><path d="M2.800 4.200C3 2.400 4.600 1.600 6 1.700 7.600 1.800 8.800 3 8.600 4.600 8.500 5.400 8.200 5.900 7.800 6.200" stroke="#14140c" stroke-width="1.200" fill="none"/><circle cx="7.100" cy="7.200" r=".7" fill="#14140c"/></g>
<text x="34.6" y="37.9" font-size="9.6" fill="#f4f4f8" textLength="46.2" lengthAdjust="spacingAndGlyphs" stroke="#f4f4f8" stroke-width=".28">Axis Systems</text>
<text x="34.6" y="54.24" font-size="9.6" fill="#f4f4f8" textLength="25.4" lengthAdjust="spacingAndGlyphs" stroke="#f4f4f8" stroke-width=".28">Class A</text>
<text x="34.6" y="70.58" font-size="9.6" fill="#f4f4f8" textLength="43.6" lengthAdjust="spacingAndGlyphs" stroke="#f4f4f8" stroke-width=".28">Tooling axis</text>
<text x="34.6" y="86.92" font-size="9.6" fill="#f4f4f8" textLength="24.8" lengthAdjust="spacingAndGlyphs" stroke="#f4f4f8" stroke-width=".28">Class B</text>
<text x="34.6" y="103.26" font-size="9.6" fill="#f4f4f8" textLength="24.8" lengthAdjust="spacingAndGlyphs" stroke="#f4f4f8" stroke-width=".28">Class C</text>
<text x="34.8" y="119.6" font-size="9.6" fill="#f4f4f8" textLength="35.6" lengthAdjust="spacingAndGlyphs" stroke="#f4f4f8" stroke-width=".28">Solid part</text>
<text x="34.8" y="135.94" font-size="9.6" fill="#f4f4f8" textLength="16.8" lengthAdjust="spacingAndGlyphs" stroke="#f4f4f8" stroke-width=".28">Core</text>
<text x="34.8" y="152.28" font-size="9.6" fill="#f4f4f8" textLength="22.2" lengthAdjust="spacingAndGlyphs" stroke="#f4f4f8" stroke-width=".28">Cavity</text>
<text x="36.2" y="168.62" font-size="9.6" fill="#f4f4f8" textLength="73.8" lengthAdjust="spacingAndGlyphs" stroke="#f4f4f8" stroke-width=".28">Free Form Analysis.1</text>
<text x="46.4" y="184.96" font-size="9.6" fill="#f4f4f8" textLength="77.1" lengthAdjust="spacingAndGlyphs" stroke="#f4f4f8" stroke-width=".28">Class A Draft Analysis</text>
<text x="46.4" y="201.3" font-size="9.6" fill="#f4f4f8" textLength="66.6" lengthAdjust="spacingAndGlyphs" stroke="#f4f4f8" stroke-width=".28">Part Draft Analysis</text>
<text x="23" y="217.64" font-size="9.6" fill="#f4f4f8" textLength="40.7" lengthAdjust="spacingAndGlyphs" stroke="#f4f4f8" stroke-width=".28">Publication</text>
<text x="34.8" y="233.98" font-size="9.6" fill="#f4f4f8" textLength="30.4" lengthAdjust="spacingAndGlyphs" stroke="#f4f4f8" stroke-width=".28">CLASS A</text>
<text x="34.8" y="250.32" font-size="9.6" fill="#f4f4f8" textLength="43.2" lengthAdjust="spacingAndGlyphs" stroke="#f4f4f8" stroke-width=".28">Tooling axis</text>
<text x="34.8" y="266.66" font-size="9.6" fill="#f4f4f8" textLength="24.6" lengthAdjust="spacingAndGlyphs" stroke="#f4f4f8" stroke-width=".28">Class B</text>
<text x="34.8" y="283.0" font-size="9.6" fill="#f4f4f8" textLength="24.6" lengthAdjust="spacingAndGlyphs" stroke="#f4f4f8" stroke-width=".28">Class C</text>
<text x="34.6" y="299.34" font-size="9.6" fill="#f4f4f8" textLength="53.4" lengthAdjust="spacingAndGlyphs" stroke="#f4f4f8" stroke-width=".28">Closed Surface</text>
<text x="34.6" y="315.68" font-size="9.6" fill="#f4f4f8" textLength="55.4" lengthAdjust="spacingAndGlyphs" stroke="#f4f4f8" stroke-width=".28">Parting Surface</text>
<text x="34.6" y="332.02" font-size="9.6" fill="#f4f4f8" textLength="17.2" lengthAdjust="spacingAndGlyphs" stroke="#f4f4f8" stroke-width=".28">Core</text>
<text x="34.6" y="348.36" font-size="9.6" fill="#f4f4f8" textLength="22.4" lengthAdjust="spacingAndGlyphs" stroke="#f4f4f8" stroke-width=".28">Cavity</text>
<text x="34.6" y="364.7" font-size="9.6" fill="#f4f4f8" textLength="35.9" lengthAdjust="spacingAndGlyphs" stroke="#f4f4f8" stroke-width=".28">Solid part</text>
<rect x="0" y="32" width="7.100" height="375" fill="#5a5ab6"/><rect x="0" y="32" width=".8" height="375" fill="#8c8c9e"/>
<rect x=".8" y="33" width="6.300" height="7.400" fill="#7878f2"/><rect x=".8" y="99.800" width="6.300" height="300.400" fill="#7a7af6"/><rect x=".8" y="400.200" width="6.300" height="6.800" fill="#7878f2"/>
<path d="M1.800 38.800L4 35l2.200 3.800z" fill="#000"/><path d="M1.800 402.300L4 406l2.200-3.700z" fill="#000"/>
<g stroke-linejoin="round"><path d="M725.500 77.200C725.700 73.600 730.500 71.200 736 71.200C740 71.200 744 71.800 746.400 72.400L754.200 79C749.500 81.400 743 83.200 738 83.200C731 83.200 725.500 80.800 725.500 77.200Z" fill="#1d5668" stroke="#cfa9e6" stroke-width=".75"/>
<path d="M741.400 44.600C737 43.800 733.600 46.600 731.200 50C728 54.600 725.600 60 724.600 66.400L739.800 63Z" fill="#0d0d52"/>
<path d="M741.200 46C737.400 46 734 49.400 732 53.200L739.800 62.800Z" fill="#19476c"/>
<path d="M741.400 44.600C737 43.800 733.600 46.600 731.200 50C728 54.600 725.600 60 724.600 66.400L739.800 63M741.200 46C737.400 46 734 49.400 732 53.200L739.800 62.800" fill="none" stroke="#cfa9e6" stroke-width=".7"/>
<path d="M741.500 42L740.600 77.200" stroke="#d9c1ee" stroke-width=".95"/><circle cx="741.500" cy="42" r="1.350" fill="#ecdff8"/><circle cx="740" cy="62.900" r=".8" fill="#e8d8f6"/>
<rect x="739" y="75.400" width="3.300" height="3.600" fill="#e81010"/></g>
<text x="736" y="41.2" font-size="5.6" fill="#d6c224" font-weight="bold" >z</text><text x="724.6" y="56" font-size="5.6" fill="#d6c224" font-weight="bold" >x</text><text x="718.6" y="67" font-size="5.6" fill="#d6c224" font-weight="bold" >y</text>
<g stroke="#eeeef8" stroke-width=".75" fill="none" stroke-linecap="round"><path d="M770 395.600L770.900 386M770 395.600L762.400 398.500M770 395.600L765.900 391.700"/></g><text x="771.6" y="387.4" font-size="4.6" fill="#f0f0f8" >z</text><text x="761.4" y="397.4" font-size="4.2" fill="#f0f0f8" >y</text><text x="764.6" y="391.2" font-size="4.2" fill="#f0f0f8" >x</text>
<text x="666.6" y="401.6" font-size="8.6" fill="#9090ac" textLength="65.6" lengthAdjust="spacingAndGlyphs" >Activate Windows</text>
<text x="666.8" y="410.4" font-size="5.2" fill="#9c9cb8" textLength="88" lengthAdjust="spacingAndGlyphs" >Go to Settings to activate Windows.</text>
<rect x="749.6" y="92.3" width="14.899999999999999" height="108.90000000000002" fill="#1c1c44"/><rect x="749" y="91.8" width="14.2" height="108.50000000000001" fill="#d3d3eb"/><rect x="749" y="91.8" width="1.300" height="108.50000000000001" fill="#f0f0fa"/><rect x="749" y="91.8" width="14.2" height="13" fill="#fdfdff"/><rect x="755" y="94.8" width="7.900" height="7.800" fill="#d0464c"/><path d="M757.8 97.5l2.300 2.300M760.1 97.5l-2.300 2.300" stroke="#fff" stroke-width="1"/><text x="751.4" y="100.39999999999999" font-size="4.4" fill="#50506a" >V</text>
<rect x="765.8000000000001" y="104.1" width="14.899999999999999" height="26.800000000000004" fill="#1c1c44"/><rect x="765.2" y="103.6" width="14.2" height="26.400000000000006" fill="#d3d3eb"/><rect x="765.2" y="103.6" width="1.300" height="26.400000000000006" fill="#f0f0fa"/><rect x="765.2" y="103.6" width="14.2" height="13" fill="#fdfdff"/><rect x="771.2" y="106.6" width="7.900" height="7.800" fill="#d0464c"/><path d="M774.0 109.3l2.300 2.300M776.3000000000001 109.3l-2.300 2.300" stroke="#fff" stroke-width="1"/><text x="767.6" y="112.19999999999999" font-size="4.4" fill="#50506a" >S</text>
<rect x="765.8000000000001" y="138.5" width="14.899999999999999" height="49.20000000000001" fill="#1c1c44"/><rect x="765.2" y="138" width="14.2" height="48.80000000000001" fill="#d3d3eb"/><rect x="765.2" y="138" width="1.300" height="48.80000000000001" fill="#f0f0fa"/><rect x="765.2" y="138" width="14.2" height="13" fill="#fdfdff"/><rect x="771.2" y="141" width="7.900" height="7.800" fill="#d0464c"/><path d="M774.0 143.7l2.300 2.300M776.3000000000001 143.7l-2.300 2.300" stroke="#fff" stroke-width="1"/><text x="767.6" y="146.6" font-size="4.4" fill="#50506a" >F</text>
<rect x="749.4" y="204.2" width="14.899999999999999" height="96.1" fill="#1c1c44"/><rect x="748.8" y="203.7" width="14.2" height="95.69999999999999" fill="#d3d3eb"/><rect x="748.8" y="203.7" width="1.300" height="95.69999999999999" fill="#f0f0fa"/><rect x="748.8" y="203.7" width="14.2" height="13" fill="#fdfdff"/><rect x="754.8" y="206.7" width="7.900" height="7.800" fill="#d0464c"/><path d="M757.5999999999999 209.39999999999998l2.300 2.300M759.9 209.39999999999998l-2.300 2.300" stroke="#fff" stroke-width="1"/><text x="751.1999999999999" y="212.29999999999998" font-size="4.4" fill="#50506a" >O</text>
<rect x="765.8000000000001" y="218.5" width="14.899999999999999" height="155.20000000000002" fill="#1c1c44"/><rect x="765.2" y="218" width="14.2" height="154.8" fill="#d3d3eb"/><rect x="765.2" y="218" width="1.300" height="154.8" fill="#f0f0fa"/><rect x="765.2" y="218" width="14.2" height="13" fill="#fdfdff"/><rect x="771.2" y="221" width="7.900" height="7.800" fill="#d0464c"/><path d="M774.0 223.7l2.300 2.300M776.3000000000001 223.7l-2.300 2.300" stroke="#fff" stroke-width="1"/><text x="767.6" y="226.6" font-size="4.4" fill="#50506a" >V</text>
<rect x="749.6" y="306.5" width="14.899999999999999" height="84.20000000000002" fill="#1c1c44"/><rect x="749" y="306" width="14.2" height="83.80000000000001" fill="#d3d3eb"/><rect x="749" y="306" width="1.300" height="83.80000000000001" fill="#f0f0fa"/><rect x="749" y="306" width="14.2" height="13" fill="#fdfdff"/><rect x="755" y="309" width="7.900" height="7.800" fill="#d0464c"/><path d="M757.8 311.7l2.300 2.300M760.1 311.7l-2.300 2.300" stroke="#fff" stroke-width="1"/><text x="751.4" y="314.6" font-size="4.4" fill="#50506a" >S</text>
<circle cx="756.800" cy="112.700" r="1.250" fill="#14146e"/><circle cx="756.800" cy="112.700" r="1.900" fill="none" stroke="#8cc8f0" stroke-width=".5"/><path d="M760.0999999999999 116.1h2.400l-1.200 1.600z" fill="#000"/>
<path d="M756.800 120v7.400" stroke="#2a50e8" stroke-width="1.100"/><path d="M756.800 122.400v2.400" stroke="#40d8f0" stroke-width="1.100"/><path d="M760.0999999999999 127.5h2.400l-1.200 1.600z" fill="#000"/>
<path d="M753.200 138.400l3.200-3.600h5l-3.200 3.600z" fill="#f0e060" stroke="#445" stroke-width=".6"/><path d="M760.0999999999999 138.9h2.400l-1.200 1.600z" fill="#000"/>
<path d="M750.600 143h11.200" stroke="#f2f2fa" stroke-width=".6"/>
<g transform="translate(752.20,143.00) scale(1)"><path d="M2.200 3.400C3.600 1.400 5 3.800 6.400 2.200 7 1.400 7.600 1 8.200 .8" stroke="#2cc4d4" stroke-width=".9" fill="none"/><path d="M1 8.800C2 5.400 8 5.200 9.200 8.600" stroke="#2636d6" stroke-width="1.900" fill="none"/><path d="M2.200 8C3.400 6.200 6.800 6.200 8 7.800" stroke="#4ce0c0" stroke-width="1" fill="none"/><path d="M3.800 7C4.600 6.600 5.600 6.600 6.400 7" stroke="#e8e860" stroke-width=".7" fill="none"/></g><path d="M760.0999999999999 152.29999999999998h2.400l-1.200 1.600z" fill="#000"/>
<g transform="translate(752.20,154.00) scale(1)"><path d="M.8 4.800L4 1.200v1.900c3-.5 5 .8 5.200 3.300 0 1.700-1.500 2.700-3.200 2.700l.5-1.500C5.400 6.400 4.600 6.100 4 6.300v2z" fill="#2440d8"/><path d="M3.400 4.200c2.400-.4 4 .4 4.400 2.200l-1.600.4C5.600 5.600 4.600 5.200 3.400 5.400z" fill="#38d8e0"/><path d="M4.400 4.400c1.200 0 2 .4 2.600 1.200" stroke="#90f080" stroke-width=".7" fill="none"/></g><path d="M760.0999999999999 163.29999999999998h2.400l-1.200 1.600z" fill="#000"/>
<g transform="translate(752.20,166.00) scale(1)"><path d="M1 6l5-5 3.400 2.400-4.400 5.800z" fill="#2a48e0"/><path d="M3 5.800l3.600-3.400 1.800 1.400-3.600 4z" fill="#40d0e8"/><path d="M4 6.400l3-3" stroke="#a8f0f0" stroke-width=".8"/></g><path d="M760.0999999999999 175.1h2.400l-1.200 1.600z" fill="#000"/>
<circle cx="757.200" cy="183.700" r="3.500" fill="none" stroke="#2858d8" stroke-width="1.100"/><circle cx="757.200" cy="183.700" r="3.300" fill="none" stroke="#48d0e8" stroke-width=".5"/><path d="M760.0999999999999 187.29999999999998h2.400l-1.200 1.600z" fill="#000"/>
<g transform="translate(752.20,190.00) scale(1)"><path d="M2 3.400C3 1 7 .8 8 3.400 8.800 6 5 6.400 3.600 7.600 2.800 8.600 4.400 9.600 6 9" stroke="#2848e0" stroke-width="1.300" fill="none"/><path d="M2.600 3C4 1.600 6.600 1.800 7.400 3.600" stroke="#40c8f0" stroke-width=".7" fill="none"/></g><path d="M760.0999999999999 198.7h2.400l-1.200 1.600z" fill="#000"/>
<g transform="translate(767.70,119.00) scale(1)"><rect x="1.400" y="2.600" width="6.600" height="6" fill="#f4f4fa" stroke="#5a5a86" stroke-width=".7"/><path d="M3.400 7.400l4.800-5.800" stroke="#1a1a50" stroke-width="1.100"/><path d="M2.600 8l2.800 .1" stroke="#30b060" stroke-width=".7"/><path d="M8 1.600l.9-.9" stroke="#e8c020" stroke-width="1"/><path d="M2.400 4.200h2.400" stroke="#8ab0e0" stroke-width=".6"/></g><path d="M776.4 128.1h2.400l-1.200 1.600z" fill="#000"/>
<g transform="translate(768.40,153.00) scale(1)"><path d="M1.600 4C2 1.400 6.600 .6 7.600 3 8.400 5.200 5 5.600 4.200 7.200" stroke="#2448d8" stroke-width="1.500" fill="none"/><path d="M2.600 3.400C3.600 1.800 6 1.800 6.800 3.200" stroke="#38d0e8" stroke-width=".8" fill="none"/><path d="M6.400 8l1.400 1.400M7.800 8L6.400 9.400" stroke="#1a1a70" stroke-width=".6"/></g><path d="M776.5999999999999 160.9h2.400l-1.200 1.600z" fill="#000"/>
<g transform="translate(768.40,165.20) scale(1)"><path d="M1.700 1.700h6.600M1.700 3.900h6.600M1.700 6.100h6.600M1.700 8.300h6.600M1.700 1.700v6.600M3.900 1.700v6.600M6.100 1.700v6.600M8.300 1.700v6.600" stroke="#4a4af0" stroke-width=".45"/><circle cx="1.7" cy="1.7" r=".8" fill="#1e1ed4"/><circle cx="1.7" cy="3.9" r=".8" fill="#1e1ed4"/><circle cx="1.7" cy="6.1" r=".8" fill="#1e1ed4"/><circle cx="1.7" cy="8.3" r=".8" fill="#1e1ed4"/><circle cx="3.9" cy="1.7" r=".8" fill="#1e1ed4"/><circle cx="3.9" cy="3.9" r=".8" fill="#1e1ed4"/><circle cx="3.9" cy="6.1" r=".8" fill="#1e1ed4"/><circle cx="3.9" cy="8.3" r=".8" fill="#1e1ed4"/><circle cx="6.1" cy="1.7" r=".8" fill="#1e1ed4"/><circle cx="6.1" cy="3.9" r=".8" fill="#1e1ed4"/><circle cx="6.1" cy="6.1" r=".8" fill="#1e1ed4"/><circle cx="6.1" cy="8.3" r=".8" fill="#1e1ed4"/><circle cx="8.3" cy="1.7" r=".8" fill="#1e1ed4"/><circle cx="8.3" cy="3.9" r=".8" fill="#1e1ed4"/><circle cx="8.3" cy="6.1" r=".8" fill="#1e1ed4"/><circle cx="8.3" cy="8.3" r=".8" fill="#1e1ed4"/></g><path d="M776.5999999999999 173.5h2.400l-1.200 1.600z" fill="#000"/>
<g transform="translate(768.40,176.30) scale(1)"><path d="M1.400 2.600l3-1.600 4 1.400.4 4.400-3 2.400-4-1.400z" fill="#e8c838"/><path d="M3 4l3-.6.600 3-3 .8z" fill="#f08030"/><path d="M1.400 6l2 2.400 3 .2" stroke="#30a060" stroke-width="1" fill="none"/><path d="M4.400 1.200l3.600 1.400" stroke="#40b0d0" stroke-width=".9"/></g>
<g transform="translate(751.50,218.70) scale(1)"><rect x="1" y="1" width="8" height="8" fill="#2038c8"/><rect x="1.800" y="1.800" width="2.800" height="2.800" fill="#38c8e8"/><rect x="5.600" y="1.800" width="2.600" height="2.600" fill="#2a88e0"/><rect x="1.800" y="5.600" width="2.600" height="2.600" fill="#30a8e0"/><rect x="5.400" y="5.400" width="2.800" height="2.800" fill="#50e0e0"/></g><path d="M759.9 227.5h2.400l-1.200 1.600z" fill="#000"/>
<g transform="translate(751.50,230.00) scale(1)"><path d="M.8 2l4 1.600 4-1.800-1.600 3.400-3.400 1.600 1.400 2-3.600-1.400 1.800-2.400z" fill="#2850e0"/><path d="M3 4.600l3.600-1.800 1.800.6-4 2.400z" fill="#f0e468"/><path d="M2 6.400l3 .4 2.400-1.400" stroke="#38d8e8" stroke-width="1" fill="none"/></g><path d="M759.9 239.1h2.400l-1.200 1.600z" fill="#000"/>
<g transform="translate(751.50,242.60) scale(1)"><path d="M.8 8C1 4 3.400 2 5.600 2.200 8 2.400 9.400 4.800 9.400 7.400L8 8.200C7 7 3.600 7.200 2.400 8.600Z" fill="#34cfe0"/><path d="M2 7.600C2.400 5 4 3.800 5.600 4 7.200 4.200 8.200 5.600 8.400 7.200 6.800 6.400 3.600 6.600 2 7.600Z" fill="#f2ea66"/><path d="M.8 8C1 4 3.400 2 5.600 2.200" stroke="#2848d8" stroke-width=".6" fill="none"/></g><path d="M759.9 251.5h2.400l-1.200 1.600z" fill="#000"/>
<g transform="translate(751.50,254.00) scale(1)"><path d="M1.600 1.200C5 1.200 8.200 3.400 8.600 7.400L6 9.200C5.800 6.400 4 4.800 1 4.600Z" fill="#f8d8a4"/><path d="M1.600 1.200C5 1.200 8.200 3.400 8.600 7.400" stroke="#2fc6de" stroke-width="1.300" fill="none"/><path d="M1 4.600C4 4.800 5.800 6.400 6 9.200" stroke="#2858d8" stroke-width=".8" fill="none"/><path d="M6 9.200l2.600-1.800" stroke="#e06868" stroke-width=".7"/><path d="M1.600 1.200L1 4.600" stroke="#283c8c" stroke-width=".7"/></g><path d="M759.9 263.1h2.400l-1.200 1.600z" fill="#000"/>
<g transform="translate(751.50,265.00) scale(1)"><path d="M1 4l5.600-3 2.400 2.400-1.400 3.200-5 2.800z" fill="#f8eca0"/><path d="M1 4l1.600 5.400" stroke="#30c8e0" stroke-width="1.200"/><path d="M6.600 1l2.400 2.400-1.400 3.200" stroke="#30c8e0" stroke-width="1.100" fill="none"/><path d="M3 5.600l4-2" stroke="#f8c078" stroke-width="1.400"/></g>
<g transform="translate(751.50,277.30) scale(1)"><path d="M1.600 3.400l2.400-1.800v5.800l-2.400 1.600z" fill="#58c8e0"/><path d="M6 3l2.800-1.600v5.600l-2.800 2z" fill="#50b8d8"/><path d="M4 1.600v5.800M8.800 1.400v5.600" stroke="#8890b8" stroke-width=".6"/></g><path d="M759.9 286.5h2.400l-1.200 1.600z" fill="#000"/>
<g transform="translate(751.50,289.00) scale(1)"><path d="M1 7.400l3-3.600 2 1.400 2.400-2 .8 3.600-3 2.400z" fill="#38c8e0"/><path d="M3.600 2.600l3.600-.4.400 2.400-3.400.6z" fill="#f0e850"/><path d="M1 7.400l3 1.600 2.400-.2" stroke="#2040c8" stroke-width="1" fill="none"/></g><path d="M759.9 297.70000000000005h2.400l-1.200 1.600z" fill="#000"/>
<g transform="translate(767.60,233.70) scale(1)"><path d="M1 6.400l3-2.400 4.400.6-2.400 3-3.400.8z" fill="#6a1ed2"/><path d="M1 6.400l1.600 2 3.400-.8 2.400-3v1.400l-2.400 3-3.400.6z" fill="#3c0c98"/><path d="M4 5.600l4.800-4.400" stroke="#e8c838" stroke-width="1.300"/><path d="M3.400 6.200l1-.2" stroke="#222" stroke-width=".8"/></g>
<g transform="translate(767.60,244.70) scale(1)"><path d="M2 2.400l3-1 .4 5-3 1.600z" fill="#c8c0d8"/><path d="M5.600 2.600c2.400-.4 3.600 1.400 3 3-.6 1.400-2 1.600-3 1.200z" fill="#6a1ed2"/><path d="M1.600 5l3 1.400" stroke="#e8d838" stroke-width="1.400"/><path d="M4.400 7.200l3.400 1.400-2.400.8z" fill="#6a1ed2"/></g><path d="M776.4 253.5h2.400l-1.200 1.600z" fill="#000"/>
<g transform="translate(767.60,256.70) scale(1)"><path d="M1 5.400l4.600-3.600 3.600 1.400-4.400 3.800z" fill="#c0a8f8"/><path d="M1 5.400l3.800 1.600v2.600l-3.800-1.600z" fill="#6a1ed2"/><path d="M4.800 7l4.400-3.800v2.600l-4.400 3.800z" fill="#3c0c98"/></g>
<g transform="translate(767.60,268.70) scale(1)"><path d="M1 5.400l4.600-3.600 3.600 1.400-4.400 3.800z" fill="#8040e0"/><path d="M1 5.400l3.800 1.600v2.600l-3.800-1.600z" fill="#6a1ed2"/><path d="M4.800 7l4.400-3.800v2.600l-4.400 3.800z" fill="#3c0c98"/><path d="M2.600 4.800l4-3" stroke="#d0c0f8" stroke-width=".8"/></g>
<g transform="translate(767.60,280.30) scale(1)"><path d="M1 5.400l4.600-3.600 3.600 1.400-4.400 3.800z" fill="#38d4e4"/><path d="M1 5.400l3.800 1.600v2.600l-3.800-1.600z" fill="#6a1ed2"/><path d="M4.800 7l4.400-3.800v2.600l-4.400 3.800z" fill="#3c0c98"/></g>
<g transform="translate(767.60,292.00) scale(1)"><path d="M1 6l4.600-4 3.600 1.400-4.400 4z" fill="#40d8e8"/><path d="M1 6l3.800 1.400v1.800l-3.800-1.600z" fill="#6a1ed2"/><path d="M4.800 7.400l4.400-4v1.800l-4.400 4z" fill="#3c0c98"/></g>
<path d="M766.800 304h11.200" stroke="#f2f2fa" stroke-width=".6"/>
<g transform="translate(767.60,304.00) scale(1)"><path d="M2 2.400l3.600-1.400 3 1.200v5.200l-3.400 2-3.200-1.600z" fill="#6a1ed2"/><path d="M5.400 4l3.200-1.800v5.200l-3.400 2z" fill="#38d4e4"/><path d="M2 2.400l3.400 1.600 3.200-1.800-3-1.200z" fill="#9060e8"/></g><path d="M776.4 312.70000000000005h2.400l-1.200 1.600z" fill="#000"/>
<g transform="translate(767.60,315.60) scale(1)"><path d="M2.400 2.600l3.600-1.800 2.600 1.400-1.600 5.600-3.400 1.600-2.400-1.600z" fill="#3a28d0"/><path d="M4 3.600l2.400-1.200 1 .8-1.400 4.400-2 .8z" fill="#38d4e4"/><path d="M2.400 2.600l-1.200 5.200" stroke="#7a3ae0" stroke-width="1.200"/></g>
<g transform="translate(767.60,327.20) scale(1)"><rect x="1.200" y="1.400" width="7.400" height="7.600" fill="#6a1ed2"/><rect x="3.200" y="2.600" width="3.600" height="6.400" fill="#38d4e4"/><path d="M1.200 1.400h7.400" stroke="#3c0c98" stroke-width="1"/></g>
<g transform="translate(767.60,339.00) scale(1)"><path d="M1.400 2.400l6-1.200 1.400 1v6l-6 1.200-1.400-1z" fill="#6a1ed2"/><path d="M3 3.600l4.400-.8v4.800l-4.400.8z" fill="#50c8e8"/><path d="M4 4.200v3.600M5.600 3.800v3.600" stroke="#e8e8ff" stroke-width=".7"/></g>
<path d="M766.800 352.600h11.200" stroke="#f2f2fa" stroke-width=".6"/>
<g transform="translate(767.60,351.40) scale(1)"><path d="M2 3l2-1.600 2 1 2.400-1 .8 2.600-1.400 1.400 1 2-2.400 1.600-2.400-1-2 .4-.6-2.600z" fill="#6a1ed2"/><path d="M3.400 4l2-.6 1 1.800-2 1z" fill="#9a60f0"/></g><path d="M776.4 359.70000000000005h2.400l-1.200 1.600z" fill="#000"/>
<g transform="translate(767.60,362.20) scale(1)"><path d="M1.400 3l3-1.600 4 1.200.4 4.400-3 2-4-1z" fill="#123c3c"/><path d="M2.600 5.400l2.400-1 2 1.400-1 2.400-2.600-.4z" fill="#6a1ed2"/><circle cx="6" cy="4.400" r="1.500" fill="#38d4e4"/><path d="M5 5.600l3.400-3.600" stroke="#e02828" stroke-width=".9"/></g>
<g transform="translate(752.00,321.00) scale(1)"><path d="M.8 7l5-3.200 3.200 2-5 3z" fill="#58e0b0"/><path d="M.8 7l5-3.200 3.200 2" stroke="#30b8e0" stroke-width=".8" fill="none"/><path d="M4.800 6V2.400" stroke="#e8a020" stroke-width="1"/><circle cx="5.800" cy="1.800" r="1.200" fill="#f0a828"/><path d="M2 7.400l4.400 1" stroke="#2858d8" stroke-width=".8"/></g><path d="M760.0999999999999 330.1h2.400l-1.200 1.600z" fill="#000"/>
<g transform="translate(752.00,332.60) scale(1)"><path d="M1 5.400C2.400 2 7 1.600 9 4.400L8 6C6.400 4 3.600 4.200 2.400 6.600Z" fill="#3060e0"/><path d="M1.600 4.800C3 2.600 6.600 2.400 8.400 4.400" stroke="#48d8f0" stroke-width=".9" fill="none"/><path d="M4.800 5v2.400" stroke="#f08020" stroke-width="1.300"/><path d="M2.400 8.400C3.600 7.400 6.400 7.400 7.600 8.600" stroke="#2848d0" stroke-width="1.200" fill="none"/></g><path d="M760.0999999999999 341.70000000000005h2.400l-1.200 1.600z" fill="#000"/>
<g transform="translate(752.00,344.00) scale(1)"><path d="M1 4.400l2.400-2 1.400 3 3.400-3.400.8 4-3.600 3.400-2-1.200z" fill="#30c0e0"/><path d="M1 4.400l2.400 3.800 2 1.200" stroke="#2038c0" stroke-width="1" fill="none"/><path d="M4.800 5.400l3.400-3.400" stroke="#88f0f0" stroke-width=".8"/></g><path d="M760.0999999999999 353.1h2.400l-1.200 1.600z" fill="#000"/>
<g transform="translate(752.00,356.20) scale(1)"><path d="M1 8.400C1 3.400 3.400 1.200 5 1.200 7 1.200 9 3.600 9 8.400L7.200 8.800C7.200 6.600 6.200 5.400 5 5.400 3.800 5.400 2.800 6.600 2.800 8.800Z" fill="#30c8e0"/><path d="M3 5.200C3.600 3.600 4.400 3 5 3 5.800 3 6.600 3.800 7 5.200Z" fill="#f0d048"/><path d="M3.400 4.600l3.200 0" stroke="#f08828" stroke-width=".8"/></g>
<g transform="translate(752.00,367.80) scale(1)"><path d="M1.200 7.600C1.600 3 4 1.400 5.200 1.400 7 1.400 8.800 3.600 9 7.600" stroke="#30c0e0" stroke-width="1.400" fill="none"/><path d="M3 8.400C3.200 5.400 4.400 4.200 5.200 4.200 6.200 4.200 7 5.600 7.200 8.400" stroke="#60e090" stroke-width="1.400" fill="none"/><path d="M2 7C2.600 4 4 2.800 5.200 2.800" stroke="#e8e060" stroke-width=".7" fill="none"/></g>
<g transform="translate(752.00,379.80) scale(1)"><path d="M1 3.400l5.400-2.400 2.800 1.400-5.400 2.600z" fill="#30c8e8"/><path d="M1 5.600l5.400-2.400 2.800 1.400-5.400 2.600z" fill="#f0e040"/><path d="M1 7.600l5.400-2.200 2.800 1.400-5.400 2.600z" fill="#2890e0"/></g>
</svg></div>
<div id="right"><svg class="" width="16" height="376" viewBox="784 32 16 376">
<path d="M786.400 36.2h7.400" stroke="#fbfbff" stroke-width="1"/><path d="M786.400 36.95h7.400" stroke="#b4b4cc" stroke-width=".5"/>
<g transform="translate(787.70,40.00) scale(1)"><path d="M1 3.600L4 .6L6 1.200L9 5L8.400 6.400L5.400 8.800L2 8L1.400 6Z" fill="#7c7ce0"/><path d="M1.800 3.800L4.200 1.400L5.700 1.900L8.200 5.100L5.200 8L2.600 7.400L2.100 5.800Z" fill="#2a9a90"/><path d="M2.800 2.800L5 2.200L7.400 5L6.600 6L4.400 6.600L3.400 5Z" fill="#f4ec20"/></g>
<g transform="translate(787.70,51.70) scale(1)"><path d="M4 .6L8.600 1.600L7.600 5.400L4 9L1.400 6.400Z" fill="#30c8e0"/><path d="M4.600 3L6.600 3.400L5.600 6L3.600 6.600Z" fill="#f6ee96"/><path d="M7.600 5.400l.6-2.400" stroke="#283060" stroke-width=".8"/><path d="M1.400 6.400L4 9" stroke="#2060c8" stroke-width=".7"/><path d="M2 2l1.400 .8M2.400 8.400l-1 .6" stroke="#e0a0a0" stroke-width=".3"/></g>
<g transform="translate(787.70,63.80) scale(1)"><rect x="1" y="1" width="7.800" height="7.800" fill="#f4ee90" stroke="#34344c" stroke-width=".7"/><circle cx="4.800" cy="5" r="2" fill="#f8f8ff" stroke="#5858a8" stroke-width=".7"/></g><path d="M795.8 73.1h2.400l-1.200 1.600z" fill="#000"/>
<g transform="translate(787.70,75.00) scale(1)"><path d="M1 8.400l4-6.400 3-.8.800 5.600-3.600 2.400z" fill="#f0e450"/><path d="M5 2l3-.8.800 3" stroke="#38c8e0" stroke-width="1.300" fill="none"/><path d="M2.600 6.400l4.400-1.400M4.400 3.600l1.200 4" stroke="#c8a820" stroke-width=".7"/><path d="M1 8.400l4.200.8" stroke="#38c0e0" stroke-width=".8"/></g>
<g transform="translate(787.70,86.70) scale(1)"><path d="M1 5.400l2-3.600 3.600-1 2.400 3-.6 3.800-4 1.600z" fill="#30d0e8"/><path d="M3.400 3.400l2.600-.6 1 2.600-2.400 1.400z" fill="#8048d0"/><path d="M4 3.800l1.600-.2.400 1.400-1.400.6z" fill="#f8e850"/></g>
<g transform="translate(787.70,98.00) scale(1)"><path d="M1.200 4l3.400-2.800 4 1 .4 3.800-3.400 3-4-1.200z" fill="#28c8d8" stroke="#143048" stroke-width=".7"/><path d="M3.600 4l2.600-.8.800 1.800-2.600 1.600z" fill="#f4e030"/><path d="M1.200 4l4 1.200 3.400-3M5.200 5.200v3.800" stroke="#186078" stroke-width=".5" fill="none"/></g>
<path d="M786.400 113.4h7.400" stroke="#fbfbff" stroke-width="1"/><path d="M786.400 114.15h7.400" stroke="#b4b4cc" stroke-width=".5"/>
<g transform="translate(787.70,116.60) scale(1)"><path d="M1.200 3.200C1.400 1.400 3.400 .8 5 1.600L8.800 3.400C9.800 4.200 9.400 6 8.200 6.600L5 8.400C3.600 8.800 2.400 8 2 6.800Z" fill="#161616"/><path d="M2.600 3C3.400 2.200 4.600 2.400 5.200 3.200L4.400 5 2.800 4.600Z" fill="#f2f2f2"/><path d="M5.800 4.400L8 4.200 8 5.600 6 6.600Z" fill="#e4e4e4"/><path d="M3.400 5.600l2 .6-.4 1.400-1.600-.4z" fill="#cfcfcf"/><path d="M.6 9.800L2.400 6.400 4 8.400Z" fill="#f09038"/><path d="M8.400 3.200L9.800 .6" stroke="#f09038" stroke-width="1.100"/></g>
<path d="M786.400 132.3h7.400" stroke="#fbfbff" stroke-width="1"/><path d="M786.400 133.05h7.400" stroke="#b4b4cc" stroke-width=".5"/>
<g transform="translate(787.70,136.30) scale(1)"><path d="M1 8l1.600-3 1.400.6 1-3.600 1.600 3 1.400-.8 1.400 3.800z" fill="#b88868"/><path d="M2 8.600h7" stroke="#e8d0c0" stroke-width="1"/><path d="M4.600 2.400l.8-.8.800 1" stroke="#f8f0e8" stroke-width=".8" fill="none"/><path d="M3 6l1 .6M6.600 5.600l1 1" stroke="#f4d8c0" stroke-width=".8"/></g><path d="M795.8 145.5h2.400l-1.200 1.600z" fill="#000"/>
<g transform="translate(787.70,148.50) scale(1)"><path d="M1.600 4c0-2 2-2.600 3.600-2.600 2.400 0 3.600 1 3.600 2.600 0 1.600-1.400 2.400-3.600 2.400l-2 1.800v-2c-1-.4-1.600-1.200-1.600-2.200z" fill="#f2f2f8" stroke="#c0c0d0" stroke-width=".5"/></g><path d="M795.8 157.7h2.400l-1.200 1.600z" fill="#000"/>
<g transform="translate(787.70,159.40) scale(1)"><path d="M1.600 5.600C3 3 6 1.800 8.600 2.400" stroke="#a8a8b4" stroke-width="1.100" fill="none"/><path d="M1.400 8.400C3.400 7 6.400 7 8.400 8.200" stroke="#a0a0ac" stroke-width="1.300" fill="none"/><path d="M3.600 5.600l3.600-1" stroke="#c4c4cc" stroke-width=".8"/></g>
<path d="M786.400 173.6h7.400" stroke="#fbfbff" stroke-width="1"/><path d="M786.400 174.35h7.400" stroke="#b4b4cc" stroke-width=".5"/>
<g transform="translate(787.70,178.00) scale(1)"><path d="M2.600 .8l5.400 5.400-2.400.2 1.400 2.800-1.200.6-1.400-2.800-1.800 1.600z" fill="#f08a28"/><path d="M3.400 2.600l3 3-1.600.2-1.200 1z" fill="#f8c890"/></g><path d="M795.8 187.29999999999998h2.400l-1.200 1.600z" fill="#000"/>
<g transform="translate(787.70,190.00) scale(1)"><path d="M1.200 1.400l7.400 7.400M8.400 1.400l-7 7.200" stroke="#141414" stroke-width="1.200"/><circle cx="4.800" cy="5" r="1.500" fill="#30b8c8"/><circle cx="1.600" cy="1.800" r=".9" fill="#141414"/><circle cx="8.400" cy="8.400" r=".9" fill="#141414"/></g>
<path d="M786.400 215.6h7.400" stroke="#fbfbff" stroke-width="1"/><path d="M786.400 216.35h7.400" stroke="#b4b4cc" stroke-width=".5"/>
<g transform="translate(787.70,219.20) scale(1)"><path d="M1 4.400C2.400 1.400 6 1 8.600 3.400l.8 3.600-2.400-2C5.400 3.800 3.400 4 2.400 5.400z" fill="#1a1a1a"/><path d="M1.400 5.600l3 3.600 3-1z" fill="#f4f0ec"/><path d="M1 4.400l2 .6" stroke="#f08830" stroke-width="1.300"/><path d="M4 6l3.600 1.600" stroke="#e8a878" stroke-width=".9"/></g>
<path d="M786.400 234.6h7.400" stroke="#fbfbff" stroke-width="1"/><path d="M786.400 235.35h7.400" stroke="#b4b4cc" stroke-width=".5"/>
<g transform="translate(787.70,238.40) scale(1)"><rect x="1" y=".8" width="8.200" height="8.400" fill="#e4e4f0"/><path d="M1.400 .8v8h8" stroke="#70708c" stroke-width=".8" fill="none"/><path d="M1.600 8.400l7-6.800" stroke="#f0e030" stroke-width="1.100"/><path d="M1.800 7.600C3.400 1.600 6.400 1 8.800 5.600" stroke="#3858e0" stroke-width=".9" fill="none"/></g>
<path d="M786.400 255.6h7.400" stroke="#fbfbff" stroke-width="1"/><path d="M786.400 256.35h7.400" stroke="#b4b4cc" stroke-width=".5"/>
<g transform="translate(787.70,259.40) scale(1)"><path d="M.8 8.200C1 5 3 3.600 5 3.600 7 3.600 9 5 9.200 8.200 6.400 6.800 3.600 6.800 .8 8.200Z" fill="#30c0e0" stroke="#1c3c78" stroke-width=".5"/><path d="M5 2.800l1.900 3h-3.800z" fill="#f4e030"/><circle cx="5" cy="1.300" r=".9" fill="#111"/><path d="M5 2v1" stroke="#111" stroke-width=".5"/></g>
<g transform="translate(787.70,270.30) scale(1)"><g transform="translate(10,0) scale(-1,1)"><path d="M1.400 3.400l5-2.200 2.600 1.600-5 2.400z" fill="#30c8e0"/><path d="M1.400 5.200l5-2.200 2.600 1.600-5 2.400z" fill="#f0e450"/><path d="M1.400 7l5-2.200 2.600 1.600-5 2.400z" fill="#30c0e0"/></g><path d="M1 3l3.400 5M1.400 7.600l2.400-.6" stroke="#111" stroke-width=".8"/></g>
<g transform="translate(787.70,282.00) scale(1)"><path d="M1.600 3.400l4-2.200 3.400 2-1 3.800-3.800 2-2.600-2z" fill="#30c8e0"/><path d="M3 3.800l3-1.600 2 1.200-3 1.800z" fill="#f0e460"/><path d="M1.400 5l.2 4" stroke="#f08020" stroke-width="1.200"/><path d="M3.400 6.400l3.400-1.800" stroke="#f4f4b0" stroke-width=".8"/></g>
<g transform="translate(787.70,294.30) scale(1)"><path d="M1 3.600l3-1.800 1.600 2 3-2.400.6 3.600-3.400 3.400-3.400-1.200z" fill="#30c8e0"/><path d="M5.600 3.800l1.600 4.800M7.400 1.400l1.400-1" stroke="#111" stroke-width=".8"/><path d="M2 4.400l3 1.600" stroke="#a0f0f0" stroke-width=".7"/></g>
<path d="M786.400 309.3h7.400" stroke="#fbfbff" stroke-width="1"/><path d="M786.400 310.05h7.400" stroke="#b4b4cc" stroke-width=".5"/>
<g transform="translate(787.70,312.80) scale(1)"><circle cx="5" cy="4.400" r="2.200" fill="#2868e8"/><circle cx="2" cy="6.600" r="1.500" fill="#f0a868"/><circle cx="8" cy="6.600" r="1.500" fill="#f0a868"/><path d="M3.600 7.600h2.800" stroke="#e88040" stroke-width="1.200"/></g>
<g transform="translate(787.70,324.30) scale(1)"><path d="M.8 5C1.600 2 4 1.200 5.400 1.200 7.400 1.200 9 2.600 9.400 5L7.600 5.400C7.400 4 6.400 3.400 5.200 3.400 4 3.400 3 4 2.600 5.600Z" fill="#2878e0"/><path d="M1.400 4.200C2.400 2.200 4.400 1.800 5.400 1.800" stroke="#40d8f0" stroke-width=".8" fill="none"/><rect x="4" y="4.400" width="2.200" height="3.600" fill="#a8a8b0"/><path d="M3 8.600h4.400" stroke="#30b060" stroke-width="1.200"/></g>
<g transform="translate(787.70,336.40) scale(1)"><path d="M.8 9C1.600 5.600 3.600 4.400 5.200 4.400 7 4.400 8.800 5.800 9.400 8.800L7.600 9C7.200 7.400 6.200 6.800 5.200 6.800 4 6.800 3.200 7.600 2.800 9.200Z" fill="#30c0e8"/><path d="M1 1l8 3.400" stroke="#111" stroke-width=".8"/><path d="M1 1.400v7M9 1.600v7" stroke="#2868e0" stroke-width="1.100"/><path d="M4.200 5.600h2" stroke="#30a050" stroke-width="1"/></g>
</svg></div>
<div id="btb"><svg class="" width="800" height="17" viewBox="0 407 800 17">
<path d="M2.6 410v7" stroke="#a2a2ba" stroke-width=".8"/><path d="M3.4000000000000004 410v7" stroke="#fcfcff" stroke-width=".7"/>
<path d="M127.4 410v7" stroke="#a2a2ba" stroke-width=".8"/><path d="M128.20000000000002 410v7" stroke="#fcfcff" stroke-width=".7"/>
<path d="M214 410v7" stroke="#a2a2ba" stroke-width=".8"/><path d="M214.8 410v7" stroke="#fcfcff" stroke-width=".7"/>
<path d="M362.4 410v7" stroke="#a2a2ba" stroke-width=".8"/><path d="M363.2 410v7" stroke="#fcfcff" stroke-width=".7"/>
<path d="M381.4 410v7" stroke="#a2a2ba" stroke-width=".8"/><path d="M382.2 410v7" stroke="#fcfcff" stroke-width=".7"/>
<path d="M425.4 410v7" stroke="#a2a2ba" stroke-width=".8"/><path d="M426.2 410v7" stroke="#fcfcff" stroke-width=".7"/>
<path d="M445 410v7" stroke="#a2a2ba" stroke-width=".8"/><path d="M445.8 410v7" stroke="#fcfcff" stroke-width=".7"/>
<path d="M464.4 410v7" stroke="#a2a2ba" stroke-width=".8"/><path d="M465.2 410v7" stroke="#fcfcff" stroke-width=".7"/>
<path d="M496 410v7" stroke="#a2a2ba" stroke-width=".8"/><path d="M496.8 410v7" stroke="#fcfcff" stroke-width=".7"/>
<path d="M518 410v7" stroke="#a2a2ba" stroke-width=".8"/><path d="M518.8 410v7" stroke="#fcfcff" stroke-width=".7"/>
<path d="M758.4 410v7" stroke="#a2a2ba" stroke-width=".8"/><path d="M759.1999999999999 410v7" stroke="#fcfcff" stroke-width=".7"/>
<path d="M777.4 410v7" stroke="#a2a2ba" stroke-width=".8"/><path d="M778.1999999999999 410v7" stroke="#fcfcff" stroke-width=".7"/>
<g transform="translate(7.20,412.00) scale(0.88)"><path d="M1.600 .8h5l2 2v6.600h-7z" fill="#fdfbd4" stroke="#77775e" stroke-width=".6"/><path d="M6.600 .8v2h2" fill="none" stroke="#77775e" stroke-width=".5"/></g>
<g transform="translate(18.60,412.00) scale(0.88)"><path d="M.8 3h3l.8 1h4v4.600h-7.800z" fill="#d8a820"/><path d="M.8 8.600l1.600-3.600h7.200l-1.600 3.600z" fill="#f8d848"/><path d="M6 2.400c1-1 2-1 2.800 0" stroke="#333" stroke-width=".5" fill="none"/></g>
<g transform="translate(30.00,412.00) scale(0.88)"><rect x="1" y="1" width="8" height="8" fill="#1c1c28"/><rect x="2.600" y="1.600" width="4.800" height="3" fill="#d8d048"/><rect x="3" y="6" width="4" height="3" fill="#e8e8c0"/><rect x="3.600" y="6.600" width="1.200" height="2" fill="#1c1c28"/></g>
<g transform="translate(42.00,412.00) scale(0.88)"><path d="M2.600 3.600l1.400-2.800h4l-1.400 2.800z" fill="#f8f8f0" stroke="#667" stroke-width=".4"/><path d="M.8 4.600l1.800-1.200h6.200l.6 1v3l-1.400 1.400h-6.400l-.8-1z" fill="#8ea050"/><path d="M.8 4.600h7.400l1.200-.2" stroke="#e8e070" stroke-width=".9"/><path d="M2 7.600h5.600" stroke="#e0d060" stroke-width=".8"/></g>
<g transform="translate(53.60,412.00) scale(0.88)"><path d="M3 .8l3.600 6M7 .8l-3.600 6" stroke="#aaa" stroke-width=".8"/><circle cx="2.800" cy="7.800" r="1.300" fill="none" stroke="#aaa" stroke-width=".7"/><circle cx="7.200" cy="7.800" r="1.300" fill="none" stroke="#aaa" stroke-width=".7"/></g>
<g transform="translate(65.20,412.00) scale(0.88)"><rect x="1" y="1" width="5" height="6" fill="#eeeef4" stroke="#a8a8b4" stroke-width=".6"/><rect x="4" y="3.400" width="5" height="6" fill="#f2f2f8" stroke="#a8a8b4" stroke-width=".6"/></g>
<g transform="translate(77.20,412.00) scale(0.88)"><rect x="1" y="1.600" width="6.400" height="6.400" fill="#c8a838"/><rect x="2.600" y=".8" width="3" height="1.600" fill="#555"/><rect x="4.400" y="4" width="4.800" height="5.400" fill="#e8e8f8" stroke="#2848a0" stroke-width=".5"/><path d="M5.400 5.600h2.800M5.400 7h2.800" stroke="#3858c0" stroke-width=".5"/></g>
<g transform="translate(88.60,412.00) scale(0.88)"><path d="M1 4.400l3-3v2c3 0 4.600 1.600 4.600 4.400h-2c0-1.600-1-2.400-2.600-2.400v2z" fill="#28b050" stroke="#0c5020" stroke-width=".4"/></g><path d="M96.2 420.1h2.400l-1.200 1.600z" fill="#000"/>
<g transform="translate(100.20,412.00) scale(0.88)"><path d="M9 4.400l-3-3v2c-3 0-4.600 1.600-4.600 4.400h2c0-1.600 1-2.400 2.600-2.400v2z" fill="#c8c8d0" stroke="#aaa" stroke-width=".4"/></g><path d="M107.8 420.1h2.400l-1.200 1.600z" fill="#000"/>
<g transform="translate(111.60,412.00) scale(0.88)"><path d="M1 2l1.600-1 1.200 5.600-1.400 1.200z" fill="#f4e878" stroke="#555" stroke-width=".4"/><text x="3.6" y="8.8" font-size="9.5" fill="#1838c8" font-weight="bold" >?</text></g>
<text x="131.6" y="419.2" font-size="8.6" fill="#111" style="font-style:italic;font-family:'Liberation Serif',serif" stroke="#111" stroke-width=".2">f</text><text x="134.6" y="419.4" font-size="5.2" fill="#111" textLength="6.4" lengthAdjust="spacingAndGlyphs" stroke="#111" stroke-width=".15">(x)</text>
<g transform="translate(143.40,412.00) scale(0.88)"><ellipse cx="5" cy="4.400" rx="4" ry="3" fill="#f4f4f8" stroke="#222" stroke-width=".7"/><path d="M2.600 7l-.8 2.400 2.600-1.800" fill="#f4f4f8" stroke="#222" stroke-width=".6"/><path d="M3 4.400c1-1.400 3-1.400 4 0" stroke="#667" stroke-width=".5" fill="none"/></g>
<g transform="translate(153.80,412.00) scale(0.88)"><path d="M4 1.400h2v4h-2z" fill="#b8b8c0"/><circle cx="5" cy="7" r="1.800" fill="#c0c0c8"/></g>
<g transform="translate(164.20,412.00) scale(0.88)"><rect x="1" y="1.200" width="8" height="7.600" fill="#505068"/><rect x="1" y="1.200" width="8" height="2" fill="#2030c8"/><path d="M1 5h8M1 7h8" stroke="#8c8ca4" stroke-width=".4"/></g><path d="M171.8 420.1h2.400l-1.200 1.600z" fill="#000"/>
<g transform="translate(176.20,412.00) scale(0.88)"><path d="M2 5h3M5 2v6.400M5 2h2.600M5 5h2.600M5 8.400h2.600" stroke="#2060d0" stroke-width=".7" fill="none"/><circle cx="1.800" cy="5" r="1.200" fill="#e8a030"/><rect x="7" y="1" width="2.200" height="2" fill="#38c0e8"/><rect x="7" y="4" width="2.200" height="2" fill="#38c0e8"/><rect x="7" y="7.400" width="2.200" height="2" fill="#38c0e8"/></g>
<g transform="translate(187.60,412.00) scale(0.88)"><path d="M2 4l3-3 3 3v4.400h-6z" fill="#8c8c98"/><path d="M3.400 4.600h3.200v3.800h-3.200z" fill="#555560"/><path d="M3 3.600l2-2 2 2" stroke="#d0d0d8" stroke-width=".6" fill="none"/></g><path d="M195.20000000000002 420.1h2.400l-1.200 1.600z" fill="#000"/>
<g transform="translate(198.20,412.00) scale(0.88)"><rect x="1.400" y="1" width="3" height="8" fill="#38b8c8"/><rect x="1.800" y="2" width="2.200" height="1.600" fill="#f0d840"/><rect x="1.800" y="4.600" width="2.200" height="1.600" fill="#f0d840"/><path d="M6.400 1v8" stroke="#888" stroke-width=".8"/><path d="M6.400 5h3" stroke="#888" stroke-width=".6"/><rect x="7.600" y="3.600" width="1.400" height="2.800" fill="#aab"/></g>
<g transform="translate(218.60,412.00) scale(0.88)"><path d="M1 3.400l4 1.600 4-2.400-2.400 3.400 2 2.600-3.600-1.400-3 1.800 1.400-3z" fill="#34d4e8" stroke="#2040a8" stroke-width=".5"/><path d="M1.200 1.800l2.200 2" stroke="#1838a0" stroke-width=".9"/></g>
<g transform="translate(230.20,412.00) scale(0.88)"><rect x="1" y="1" width="8" height="8" fill="#b8d850"/><rect x="1" y="1" width="8" height="8" fill="none" stroke="#38a0a0" stroke-width=".8"/><path d="M2 2l6 6M8 2l-6 6" stroke="#111" stroke-width=".9"/><circle cx="5" cy="5" r="1.400" fill="#f0e840"/></g>
<g transform="translate(242.00,412.00) scale(0.88)"><path d="M5 .6v8.800M.6 5h8.800" stroke="#1c3cc0" stroke-width="1.300"/><path d="M5 0l1.600 2h-3.200zM5 10l1.600-2h-3.200zM0 5l2-1.600v3.200zM10 5l-2-1.600v3.200z" fill="#1c3cc0"/></g>
<g transform="translate(253.60,412.00) scale(0.88)"><ellipse cx="5" cy="5.400" rx="4" ry="2.600" fill="none" stroke="#2860d0" stroke-width="1.100"/><path d="M2 3.600c1-1.600 4-2 6-.6" stroke="#e87830" stroke-width="1.300" fill="none"/><circle cx="5" cy="5.400" r="1.300" fill="#f0b890"/></g>
<g transform="translate(265.20,412.00) scale(0.88)"><circle cx="4" cy="4" r="2.800" fill="#e8f4ff" stroke="#1c3cc0" stroke-width="1"/><path d="M6 6l3 3" stroke="#1c2c80" stroke-width="1.500"/><path d="M2.800 4h2.400" stroke="#1c3cc0" stroke-width=".7"/><path d="M4 2.800v2.400" stroke="#1c3cc0" stroke-width=".7"/></g>
<g transform="translate(276.60,412.00) scale(0.88)"><circle cx="4" cy="4" r="2.800" fill="#e8f4ff" stroke="#1c3cc0" stroke-width="1"/><path d="M6 6l3 3" stroke="#1c2c80" stroke-width="1.500"/><path d="M2.800 4h2.400" stroke="#1c3cc0" stroke-width=".7"/></g>
<g transform="translate(288.60,412.00) scale(0.88)"><path d="M.8 7.400l4-2.400 4.400 1.600-4 2.600z" fill="#38a8d8"/><path d="M.8 7.400l4-2.400 4.400 1.600" stroke="#1838a0" stroke-width=".6" fill="none"/><path d="M5 6.400v-4" stroke="#1838a0" stroke-width=".9"/><path d="M5 .6l1.400 2.200h-2.800z" fill="#e8a030"/></g>
<g transform="translate(300.00,412.00) scale(0.88)"><rect x="1" y="1" width="8" height="8" fill="#2038d0"/><rect x="1.800" y="1.800" width="2.800" height="2.800" fill="#40c8f0"/><rect x="5.400" y="1.800" width="2.800" height="2.800" fill="#40a8f0"/><rect x="1.800" y="5.400" width="2.800" height="2.800" fill="#40a8f0"/><rect x="5.400" y="5.400" width="2.800" height="2.800" fill="#40c8f0"/></g>
<g transform="translate(311.60,412.00) scale(0.88)"><path d="M1 3l3-2h5v5.600l-3 2.400h-5z" fill="#38c8f0"/><path d="M1 3h5v6M6 3l3-2" stroke="#2050c8" stroke-width=".6" fill="none"/><path d="M1 3l3-2h5l-3 2z" fill="#90e4f8"/></g><path d="M319.40000000000003 420.1h2.400l-1.200 1.600z" fill="#000"/>
<g transform="translate(323.60,412.00) scale(0.88)"><path d="M2 1h6v8h-6z" fill="#e4e4ee" stroke="#555568" stroke-width=".6"/><text x="3.4" y="7.4" font-size="6" fill="#333" font-weight="bold" >?</text></g><path d="M331.40000000000003 420.1h2.400l-1.200 1.600z" fill="#000"/>
<g transform="translate(335.60,412.00) scale(0.88)"><rect x="1" y="1.400" width="8" height="7.400" fill="#90a0c8"/><rect x="1.800" y="2.200" width="6.400" height="5.800" fill="#5080c0"/><path d="M2.400 7l2.400-3 3 1" stroke="#f0e040" stroke-width="1.100" fill="none"/><path d="M3 3.400l3 3.600" stroke="#38d0e0" stroke-width=".8"/></g>
<g transform="translate(347.20,412.00) scale(0.88)"><rect x="1" y="1.400" width="8" height="7.400" fill="#98a8c8"/><rect x="1.800" y="2.200" width="6.400" height="5.800" fill="#4890c8"/><path d="M2.400 6.400l3-1 2.400 1.600" stroke="#f0d040" stroke-width="1.100" fill="none"/><path d="M3 3.400h4" stroke="#38d0e0" stroke-width=".8"/></g>
<g transform="translate(366.60,412.00) scale(0.88)"><path d="M1.400 6h7.200v3h-7.200z" fill="#f4f4f8" stroke="#222" stroke-width=".6"/><path d="M2.400 5.600C2.400 2 7.600 2 7.600 5.600" stroke="#222" stroke-width="1.100" fill="none"/><path d="M3 2.600l2-1.600 2.400 1.400" stroke="#3060d0" stroke-width=".9" fill="none"/></g>
<g transform="translate(386.20,412.00) scale(0.88)"><rect x="1" y="2.600" width="8" height="5" fill="#f4f4fc" stroke="#3858c8" stroke-width=".7"/><path d="M1 1.400h8M1 8.800h8" stroke="#3858c8" stroke-width=".8"/><path d="M2.400 6.600h5.200" stroke="#e03030" stroke-width=".9"/></g>
<g transform="translate(397.60,412.00) scale(0.88)"><path d="M2 2l4-1.200 2 1.400v6l-2 1-4-1.200z" fill="#2c2c34"/><path d="M6 .8v8.400" stroke="#80808c" stroke-width=".7"/><path d="M3 3.600l2-.4v3l-2 .2z" fill="#70707c"/></g>
<g transform="translate(408.60,412.00) scale(0.88)"><path d="M3.400 3.600V2.400C3.400 .4 6.600 .4 6.600 2.400V3.600" stroke="#40402c" stroke-width=".9" fill="none"/><rect x="2.600" y="3.600" width="4.800" height="5.400" rx=".6" fill="#c8b030"/><rect x="3.600" y="4.600" width="1.400" height="3.400" fill="#f0e070"/></g>
<g transform="translate(430.60,412.00) scale(0.88)"><rect x="1" y="3" width="8" height="5" rx=".6" fill="#18181c"/><circle cx="5" cy="5.600" r="1.700" fill="#e8e8f0"/><circle cx="5" cy="5.600" r=".8" fill="#222"/><rect x="3.400" y="2" width="3" height="1.400" fill="#18181c"/><path d="M1.400 4h1.400M7.400 4h1.200" stroke="#ddd" stroke-width=".6"/></g>
<g transform="translate(450.00,412.00) scale(0.88)"><path d="M2.600 .8v8.400M4.400 .8v8.400" stroke="#70707c" stroke-width=".8"/><path d="M1 6.600h8" stroke="#c82020" stroke-width="1"/><path d="M4.400 3.600h3.600M6.400 6.600v2.600" stroke="#c82020" stroke-width=".7"/></g>
<g transform="translate(469.60,412.00) scale(0.88)"><path d="M1 5.600l4-3.200 3 1.600-3.600 3.800z" fill="#f0e048"/><path d="M1 5.600l3.400 2.200v1.400l-3.400-2.200z" fill="#908820"/><path d="M4.400 7.800l3.600-3.800v1.400l-3.600 3.800z" fill="#c0b030"/><path d="M5 4.400l4-3.600" stroke="#1c38c0" stroke-width="1.300"/></g><path d="M477.40000000000003 420.1h2.400l-1.200 1.600z" fill="#000"/>
<g transform="translate(481.20,412.00) scale(0.88)"><path d="M1 3l3.600-2 3.400 1.400-3.400 2z" fill="#f0e048"/><path d="M2.600 6.400l3-1.600 3.600 1.600-3.400 2.400z" fill="#e8d840"/><path d="M3 4.600l4 2.400" stroke="#2048d0" stroke-width="1.200"/><path d="M7.400 5l1.200 2.600-2.600-.4z" fill="#2048d0"/></g><path d="M489.0 420.1h2.400l-1.200 1.600z" fill="#000"/>
<g transform="translate(500.60,412.00) scale(0.88)"><path d="M1 5.400l6-2 2.400.6-1 2.400-5.400 3-2.400-1.400z" fill="#2838c0"/><path d="M1 5.400l6-2 2.400.6-6 2.600z" fill="#30c8e0"/><path d="M3.400 6.600l6-2.600-1 2.400-5.400 3z" fill="#d02030"/><path d="M4.600 5V1.600" stroke="#e0d020" stroke-width=".9"/><path d="M4.600 .2l1.400 1.800h-2.800z" fill="#f0e020"/><path d="M4.600 5l-2.600-2.600" stroke="#d02838" stroke-width=".8"/></g><path d="M508.8 420.1h2.400l-1.200 1.600z" fill="#000"/>
<g transform="translate(521.60,412.00) scale(0.88)"><path d="M5 5.200C5 3.800 7 3.800 7 5.200 7 7.200 2.800 7 2.800 4.600 2.800 1.600 9.200 1.400 9.200 5.200 9.200 9.200 1 9.400 .8 4.800" stroke="#9a9aa4" stroke-width="1.350" fill="none"/><path d="M5 5.200C5 3.800 7 3.800 7 5.200 7 7.200 2.800 7 2.800 4.600" stroke="#c8c8d0" stroke-width=".5" fill="none"/></g>
<g transform="translate(534.00,412.00) scale(0.88)"><circle cx="5" cy="5" r="4" fill="#f4f4f8" stroke="#18183c" stroke-width=".9"/><path d="M2.600 2.600c1-1 4-1.400 5 .4" stroke="#2868d0" stroke-width="1.300" fill="none"/><path d="M5 3.600l1.600 1.400-.4 2.400h-2.400l-.6-2.400z" fill="#fff" stroke="#888" stroke-width=".4"/></g>
<g transform="translate(545.60,412.00) scale(0.88)"><path d="M4 1v6l-3 2M4 7h5" stroke="#222" stroke-width=".8" fill="none"/><circle cx="4" cy="7" r=".9" fill="#e88020"/></g><path d="M553.4 420.1h2.400l-1.200 1.600z" fill="#000"/>
<g transform="translate(557.00,412.00) scale(0.88)"><path d="M2 2v6M2 3h2.600M2 5.400h2.600M2 8h2.600" stroke="#2858d0" stroke-width=".7" fill="none"/><rect x="4.400" y="2" width="4.800" height="2" fill="#38a0e8"/><rect x="4.400" y="4.600" width="4.800" height="1.800" fill="#2868d8"/><rect x="4.400" y="7" width="3.600" height="1.800" fill="#38a0e8"/><rect x="1" y="1" width="2" height="1.800" fill="#2858d0"/></g>
<g transform="translate(568.60,412.00) scale(0.88)"><path d="M1 .8v8.400M.8 1h8.400" stroke="#2858e0" stroke-width=".8"/><path d="M3 .8v8.400M.8 3h8.400" stroke="#2858e0" stroke-width=".8"/><path d="M5 .8v8.400M.8 5h8.400" stroke="#2858e0" stroke-width=".8"/><path d="M7 .8v8.400M.8 7h8.400" stroke="#2858e0" stroke-width=".8"/><path d="M9 .8v8.400M.8 9h8.400" stroke="#2858e0" stroke-width=".8"/></g><path d="M576.4 420.1h2.400l-1.200 1.600z" fill="#000"/>
<g transform="translate(581.20,412.00) scale(0.88)"><path d="M1.600 2.400C1.600 .6 8.400 .6 8.400 2.400v5.200C8.400 9.400 1.600 9.400 1.600 7.600z" fill="#38c8e8"/><path d="M1.600 2.400C1.600 4 8.400 4 8.400 2.400M1.600 5C1.600 6.600 8.400 6.600 8.400 5M3.600 1.400v7.600M6.400 1.400v7.600" stroke="#1848b0" stroke-width=".6" fill="none"/></g><path d="M589.0 420.1h2.400l-1.200 1.600z" fill="#000"/>
<g transform="translate(592.00,412.00) scale(0.88)"><path d="M1 3.400l2.400-2.400h5.600v5.600l-2.400 2.400h-5.600z" fill="#28b8c8" stroke="#103848" stroke-width=".7"/><path d="M1 3.400h5.600v5.600M6.600 3.400l2.400-2.400" stroke="#103848" stroke-width=".6" fill="none"/><path d="M1.600 4h4.400v4.400h-4.400z" fill="#50d8e0"/></g>
<g transform="translate(603.60,412.00) scale(0.88)"><rect x="1.600" y="1.600" width="6.800" height="6.800" fill="#f4f4fa" stroke="#98a" stroke-width=".4" stroke-dasharray="1 .6"/><rect x=".8" y=".8" width="1.800" height="1.800" fill="#30c0d8"/><rect x="7.400" y=".8" width="1.800" height="1.800" fill="#30c0d8"/><rect x=".8" y="7.400" width="1.800" height="1.800" fill="#30c0d8"/><rect x="7.400" y="7.400" width="1.800" height="1.800" fill="#30c0d8"/><path d="M6.400 3.600l2.400-2.800" stroke="#223" stroke-width=".8"/></g>
<g transform="translate(615.60,412.00) scale(0.88)"><path d="M3 1l2 5.600M1.600 2.600l5 4.400" stroke="#d01818" stroke-width="1"/><path d="M5 6.600h4.400" stroke="#2858d0" stroke-width="1"/><path d="M5 6.600l-2 2.400" stroke="#2858d0" stroke-width=".8"/></g>
<g transform="translate(627.20,412.00) scale(0.88)"><path d="M1 4.400C1.400 2 4.600 .8 7.400 1.200 9.400 1.600 9.600 3.800 8 4.800L4.400 5.600 4.400 6.800 8.600 6.400 8.600 8.600 2 9.200 1 7.400Z" fill="#f0f0f4" stroke="#a8a8b4" stroke-width=".6"/><path d="M3 4.400C4.400 3 6.400 2.800 7.600 3.400" stroke="#b4b4c0" stroke-width=".7" fill="none"/></g>
<g transform="translate(638.60,412.00) scale(0.88)"><path d="M2 2v6M2 3h2.600M2 5.400h2.600M2 8h2.600" stroke="#2858d0" stroke-width=".7" fill="none"/><rect x="4.400" y="2" width="4.800" height="2" fill="#38a0e8"/><rect x="4.400" y="4.600" width="4.800" height="1.800" fill="#2868d8"/><rect x="4.400" y="7" width="3.600" height="1.800" fill="#38a0e8"/><rect x="1" y="1" width="2" height="1.800" fill="#2858d0"/><path d="M1 5.400h2" stroke="#111" stroke-width=".7"/></g>
<g transform="translate(650.60,412.00) scale(0.88)"><path d="M3.400 2.600l3-1.400 2.600 2.400-1 3-3 .8-2-2z" fill="#f4ec30"/><path d="M1 4.400C1.600 2 3.400 1 5 1.400" stroke="#2858d0" stroke-width=".9" fill="none"/><circle cx="1.400" cy="5" r="1" fill="#2858d0"/><path d="M6.600 7l1.600 2" stroke="#111" stroke-width="1"/></g><path d="M658.8 420.5h2.400l-1.200 1.600z" fill="#000"/>
<g transform="translate(662.20,412.00) scale(0.88)"><path d="M3 .8v8.400M7 .8v8.400" stroke="#2858d8" stroke-width=".8"/><rect x="3" y="1.600" width="4" height="1.600" fill="#38a8e8"/><rect x="3" y="4.200" width="4" height="1.600" fill="#38a8e8"/><rect x="3" y="6.800" width="4" height="1.600" fill="#38a8e8"/></g>
<g transform="translate(673.60,412.00) scale(0.88)"><path d="M.8 5.600l4-4.400 4.600 2-4 4.600z" fill="#e8f0ff" stroke="#2050d0" stroke-width=".9"/><path d="M.8 5.600v1.600l4.600 2.200 4-4.600v-1.600" stroke="#2050d0" stroke-width=".8" fill="none"/></g>
<rect x="684.400" y="411.400" width="68" height="9.600" fill="#fff" stroke="#e4e4f0" stroke-width=".5"/><text x="686.2" y="418.6" font-size="5.4" fill="#222" textLength="12.6" lengthAdjust="spacingAndGlyphs" >Cavity</text><path d="M746.600 415.400l1.600 1.600l1.600-1.600" stroke="#555" stroke-width=".55" fill="none"/>
<g transform="translate(762.40,411.00) scale(1)"><path d="M1 3.600l3-1.600 2 1 2.600-1.600.4 4.600-3 3.600-3.600-.6z" fill="#e88818"/><path d="M2 4l2-1 1.400 3.600-.8 2z" fill="#f8c060"/><path d="M5.600 3.600l2.400-1.400.2 3.400-2 2.600z" fill="#c86010"/><path d="M4 3l1.400 3.600 2.600-4.400" stroke="#fff4e0" stroke-width=".6" fill="none"/><path d="M6.400 1.200l2.400-1" stroke="#555" stroke-width=".8"/></g>
<text x="785.4" y="413.4" font-size="6.6" fill="#d82838" font-weight="bold" font-style="italic">3</text>
<text x="781.6" y="418" font-size="7.4" fill="#5a2a9a" font-weight="bold" font-style="italic">D</text><text x="786.6" y="417.6" font-size="8" fill="#e89020" font-weight="bold" font-style="italic">S</text>
<text x="784" y="420.5" font-size="4.2" fill="#5a2a9a" textLength="13" lengthAdjust="spacingAndGlyphs" font-weight="bold" font-style="italic">CATIA</text>
<text x="666.8" y="410.4" font-size="5.2" fill="#bcbccc" textLength="88" lengthAdjust="spacingAndGlyphs" opacity=".8">Go to Settings to activate Windows.</text>
</svg></div>
<div id="status"><svg class="" width="800" height="9" viewBox="0 424 800 9">
<text x="1.6" y="430.6" font-size="5.6" fill="#20202c" textLength="67" lengthAdjust="spacingAndGlyphs" >Select an object or a command</text>
<rect x="647" y="424" width="124" height="8.400" fill="#fff" stroke="#c8c8dc" stroke-width=".5"/>
<rect x="773" y="424" width="10.600" height="8.400" fill="#e2e2f0" stroke="#b8b8cc" stroke-width=".5"/><rect x="786" y="424" width="12.400" height="8.400" fill="#e2e2f0" stroke="#b8b8cc" stroke-width=".5"/>
<path d="M775.600 426h4v4h-4zM777 426v4" stroke="#99a" stroke-width=".5" fill="none"/><rect x="789.600" y="425.600" width="5.400" height="5" fill="#fff" stroke="#334" stroke-width=".7"/><circle cx="792.300" cy="428.100" r="1.300" fill="#2878d0"/>
</svg></div>
<div id="task"><svg class="" width="800" height="17" viewBox="0 433 800 17">
<rect x="20" y="433.200" width="143.400" height="16.800" fill="#f3f3f3"/>
<path d="M6.800 439.200l2.800-.4v2.900h-2.800zM10 438.700l3.600-.5v3.500h-3.600zM6.800 442.100h2.800v2.900l-2.800-.4zM10 442.100h3.600v3.500l-3.600-.5z" fill="#fff"/>
<circle cx="30" cy="440" r="2.300" fill="none" stroke="#333" stroke-width=".75"/><path d="M28.300 441.800l-2.600 2.700" stroke="#333" stroke-width=".85"/>
<text x="37" y="444.4" font-size="6.6" fill="#444" textLength="53.4" lengthAdjust="spacingAndGlyphs" >Type here to search</text>
<circle cx="173" cy="441.800" r="3.100" fill="none" stroke="#fff" stroke-width="1"/>
<path d="M190 439.600h4v4.800h-4zM195.400 439.600v4.800M196.600 440.800v2.400" stroke="#e8e8e8" stroke-width=".7" fill="none"/><path d="M190 441h-1M190 443h-1" stroke="#e8e8e8" stroke-width=".6"/>
<g transform="translate(214.6,442) scale(1.22) translate(-214.6,-442)"><circle cx="214.400" cy="442" r="4" fill="#1a88d8"/><path d="M210.600 443c0-3 2-4.600 4.400-4.600 2 0 3.400 1.400 3.400 3h-4.600c0 1.600 1.400 2.800 3.600 2.400-1 1.600-3 2.400-4.800 1.600-1.200-.6-2-1.400-2-2.400z" fill="#40d0a0"/><path d="M211 444c1-2 2.400-2.600 4-2.600" stroke="#0c5aa8" stroke-width="1" fill="none"/></g>
<g transform="translate(235.2,442) scale(1.22) translate(-235.2,-442)"><path d="M231 438.600h3l.8 1h4.400v6h-8.200z" fill="#f0b820"/><path d="M231 440.800h8.200v4.800h-8.200z" fill="#f8d860"/><path d="M233 443.200h4.200v2.400h-4.200z" fill="#4898e0"/></g>
<g transform="translate(255.2,442) scale(1.22) translate(-255.2,-442)"><path d="M251.400 440.400h7.600v5.800h-7.600z" fill="#f4f4f4"/><path d="M253.600 440.400c0-2.400 3.200-2.400 3.200 0" stroke="#f4f4f4" stroke-width=".7" fill="none"/><rect x="253.600" y="441.800" width="1.400" height="1.400" fill="#e84820"/><rect x="255.400" y="441.800" width="1.400" height="1.400" fill="#70b820"/><rect x="253.600" y="443.600" width="1.400" height="1.400" fill="#2898e8"/><rect x="255.400" y="443.600" width="1.400" height="1.400" fill="#f8b810"/></g>
<g transform="translate(275.8,442) scale(1.22) translate(-275.8,-442)"><path d="M271.200 440l4.600-2.400 4.600 2.400v5.600h-9.200z" fill="#1878d0"/><path d="M271.200 440.400l4.600 2.800 4.600-2.800v5.200h-9.200z" fill="#38a8f0"/><path d="M271.200 445.600l3.600-3M280.400 445.600l-3.600-3" stroke="#1c68b8" stroke-width=".5"/></g>
<g transform="translate(296.4,442) scale(1.22) translate(-296.4,-442)"><circle cx="296.400" cy="442" r="4.200" fill="#e84030"/><path d="M296.400 442l-3.700 2a4.200 4.200 0 0 0 3.700 2.200l2-3.600z" fill="#38a850"/><path d="M296.400 442l2 .6-2 3.600a4.200 4.200 0 0 0 3.900-6z" fill="#f8c020"/><circle cx="296.400" cy="442" r="1.900" fill="#fff"/><circle cx="296.400" cy="442" r="1.500" fill="#3880e8"/></g>
<g transform="translate(317.4,442) scale(1.22) translate(-317.4,-442)"><path d="M314.400 439.400l3.600-1.600 2.400.8v6.800l-2.400.8-3.600-1.600 3.400.4v-5.600l-2 .6v3.400l-1.400.8z" fill="#e84818"/></g>
<rect x="327" y="433.200" width="20" height="16.800" fill="#3d4d58"/><rect x="333" y="438" width="8.200" height="8" fill="#0c0c24" stroke="#888" stroke-width=".4"/><path d="M334 439l5.600 6 .8-3z" fill="#f09830"/><path d="M333.800 438.800l4.400 4.600-3-2.400z" fill="#40a0ff"/>
<g transform="translate(357.4,442) scale(1.22) translate(-357.4,-442)"><circle cx="357" cy="442.400" r="3.600" fill="#e8e8f0"/><path d="M354.400 443c1-2 3-2.800 5-2" stroke="#2878d0" stroke-width=".9" fill="none"/><path d="M355 444.400c1 .8 3 .8 4 0" stroke="#38a848" stroke-width=".8" fill="none"/><path d="M358 441.600l3-3.400" stroke="#e89828" stroke-width="1.100"/><circle cx="356.600" cy="442.400" r=".8" fill="#e83828"/></g>
<g transform="translate(378,442) scale(1.22) translate(-378,-442)"><circle cx="378" cy="442" r="4" fill="#1ed760"/><path d="M375.600 440.600c1.600-.6 3.600-.4 5 .4M375.800 442.200c1.400-.5 3-.3 4.200.4M376.200 443.700c1-.3 2.200-.2 3.200.3" stroke="#12301c" stroke-width=".7" fill="none"/></g>
<g transform="translate(398,442) scale(1.22) translate(-398,-442)"><rect x="394" y="438" width="8" height="8" fill="#e4e4ec"/><circle cx="396.200" cy="440.200" r="1.500" fill="#d02828"/><circle cx="399.800" cy="440.200" r="1.500" fill="#2858d0"/><circle cx="396.200" cy="443.800" r="1.500" fill="#38a848"/><circle cx="399.800" cy="443.800" r="1.500" fill="#e89020"/></g>
<rect x="226.7" y="449" width="16.30000000000001" height="1" fill="#7ab8e8"/>
<rect x="288" y="449" width="17.19999999999999" height="1" fill="#7ab8e8"/>
<rect x="327" y="449" width="20" height="1" fill="#7ab8e8"/>
<rect x="350.6" y="449" width="14.799999999999955" height="1" fill="#7ab8e8"/>
<rect x="371.6" y="449" width="14.199999999999989" height="1" fill="#7ab8e8"/>
<rect x="391.4" y="449" width="14.600000000000023" height="1" fill="#7ab8e8"/>
<path d="M688.300 442.800l2.600-2.700 2.600 2.700" stroke="#f0f0f0" stroke-width=".8" fill="none"/>
<path d="M700.600 439.600h3.400v2.600h-3.400zM702.300 442.200v1.400M700.600 445.400h3.400v-1.800h-3.400z" stroke="#f0f0f0" stroke-width=".6" fill="none"/>
<path d="M708.600 443.400c0-1.600 1-2.400 2.400-2.400 .6-1 2.400-.6 2.400.8 1 0 1.200 1.600 0 1.800z" fill="#e8e8e8"/><circle cx="713" cy="443.800" r="1.400" fill="#e02020"/>
<path d="M718.200 439.800h5.600v3.800h-5.600zM720 445.200h2.400" stroke="#f0f0f0" stroke-width=".7" fill="none"/>
<path d="M728.400 441.200h1.200l1.600-1.400v4.600l-1.600-1.400h-1.200z" fill="#f0f0f0"/><path d="M732.200 440.600c.8.800.8 2.200 0 3M733.200 439.800c1.200 1.200 1.200 3.400 0 4.600" stroke="#f0f0f0" stroke-width=".5" fill="none"/>
<text x="739.2" y="439.8" font-size="5.3" fill="#fff" textLength="9.2" lengthAdjust="spacingAndGlyphs" >ENG</text><text x="742.4" y="446.7" font-size="5.3" fill="#fff" textLength="4.8" lengthAdjust="spacingAndGlyphs" >IN</text>
<text x="756.6" y="439.8" font-size="5.3" fill="#fff" textLength="17" lengthAdjust="spacingAndGlyphs" >5:38 PM</text><text x="753.8" y="446.7" font-size="5.3" fill="#fff" textLength="22.4" lengthAdjust="spacingAndGlyphs" >4/20/2021</text>
<path d="M783.600 439h6v4.800h-3l-1.600 1.600v-1.600h-1.400z" fill="#f4f4f4"/><circle cx="790" cy="445" r="2" fill="#1d2f3b" stroke="#f4f4f4" stroke-width=".5"/><text x="789.3" y="446.4" font-size="3.6" fill="#fff" >1</text>
</svg></div>
</div>
</body></html>
